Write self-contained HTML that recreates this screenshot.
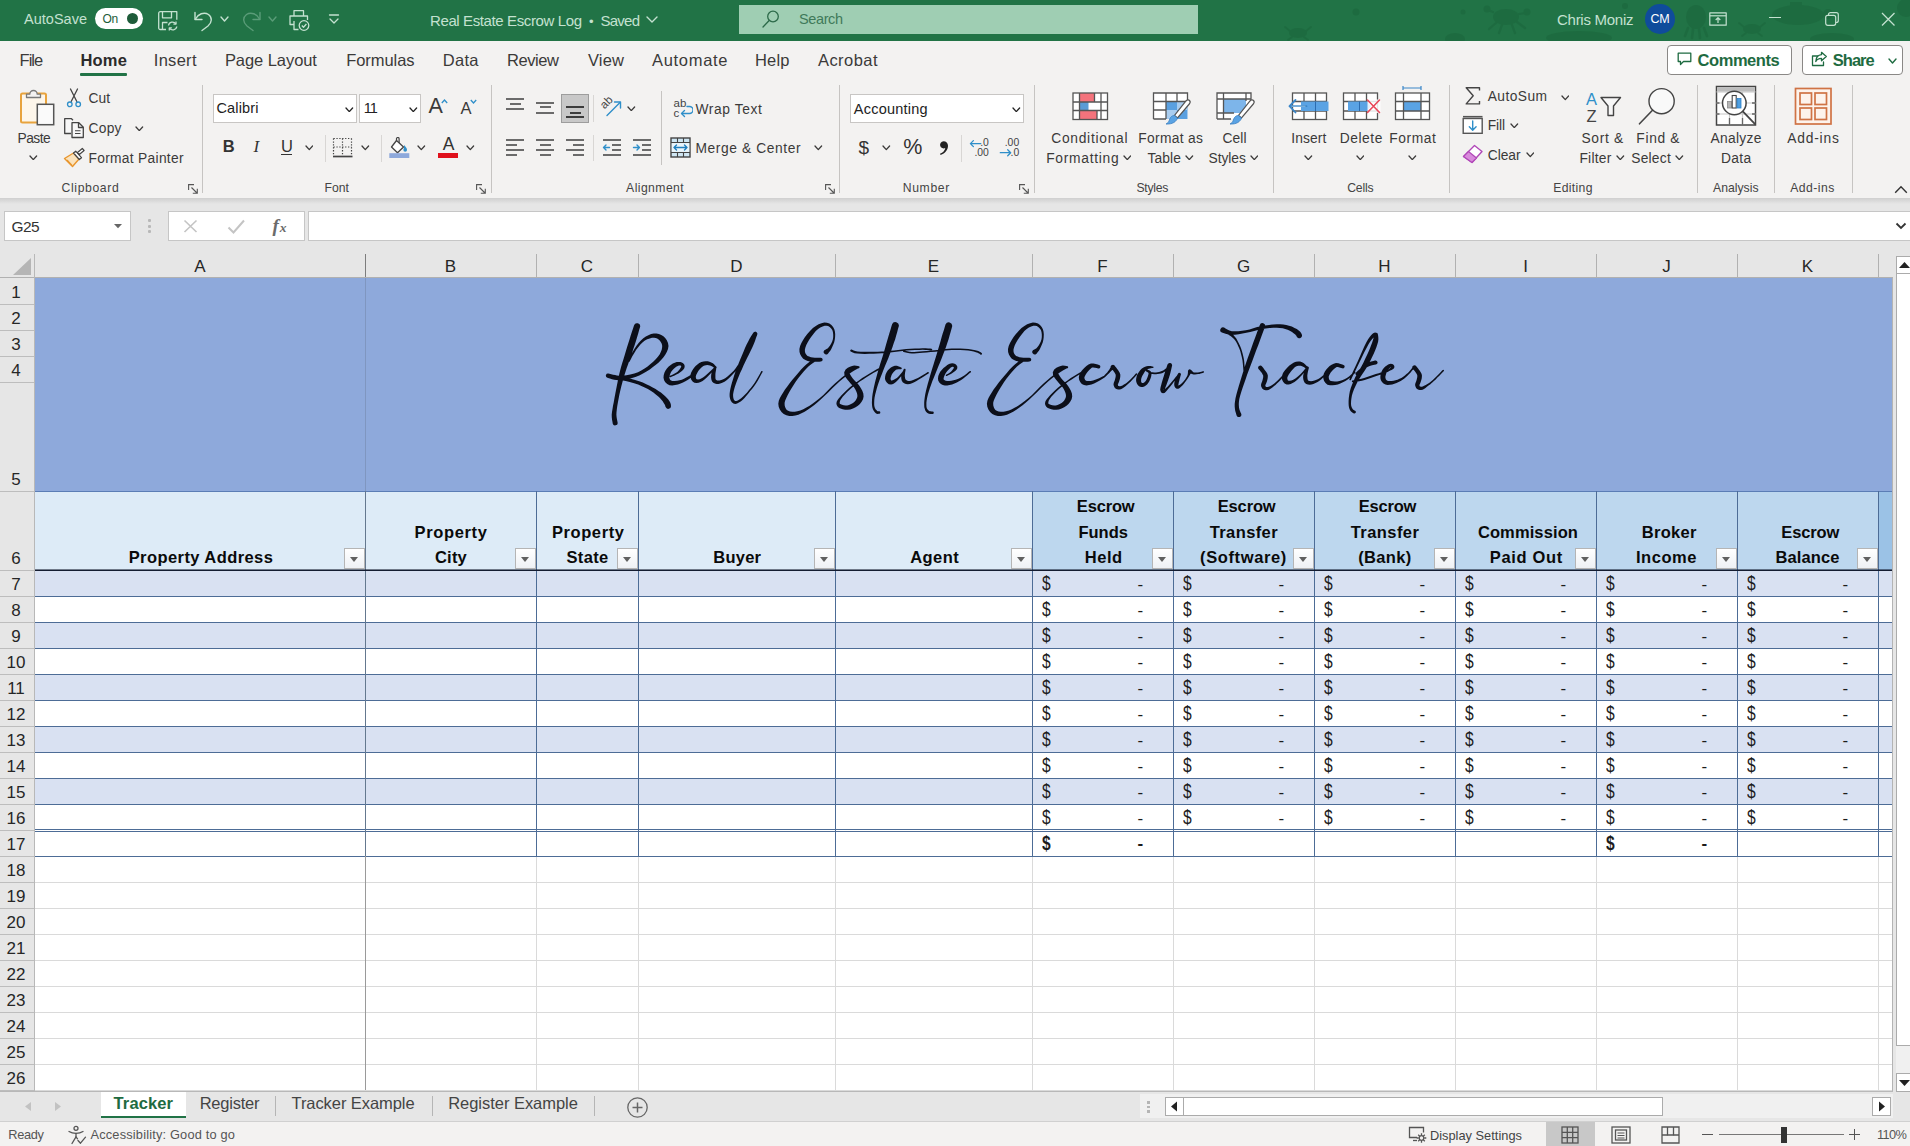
<!DOCTYPE html>
<html><head><meta charset="utf-8"><title>Real Estate Escrow Log - Excel</title>
<style>
*{box-sizing:border-box;margin:0;padding:0}
html,body{width:1910px;height:1146px;overflow:hidden;background:#e6e6e6;font-family:"Liberation Sans",sans-serif;color:#262626}
.abs{position:absolute}
.t{position:absolute;white-space:nowrap;line-height:1}
#titlebar{position:absolute;left:0;top:0;width:1910px;height:41px;background:#217346;overflow:hidden}
#tabs{position:absolute;left:0;top:41px;width:1910px;height:39px;background:#f3f2f1}
#ribbon{position:absolute;left:0;top:80px;width:1910px;height:118px;background:#f3f2f1}
#shadow{position:absolute;left:0;top:198px;width:1910px;height:6px;background:linear-gradient(#cfcfcf,#e6e6e6)}
#formula{position:absolute;left:0;top:204px;width:1910px;height:50px;background:#e6e6e6}
#grid{position:absolute;left:0;top:254px;width:1910px;height:838px;background:#fff;overflow:hidden}
#sheettabs{position:absolute;left:0;top:1092px;width:1910px;height:30px;background:#e6e6e6}
#status{position:absolute;left:0;top:1122px;width:1910px;height:24px;background:#f3f2f1}
.ch{position:absolute;top:0;height:24px;line-height:25px;text-align:center;font-size:17px;color:#262626}
.rh{position:absolute;left:0;width:34px;border-bottom:1px solid #bdbdbd;text-align:center;font-size:17px;color:#262626}
.rh span{position:absolute;left:0;right:2px;bottom:2px;line-height:18px}
.ht{position:absolute;text-align:center;font-weight:bold;font-size:16.5px;letter-spacing:.5px;line-height:20px;color:#0a0a0a;white-space:nowrap}
.fb{position:absolute;width:21px;height:21px;background:linear-gradient(#fff,#eef1f5);border:1px solid #b5b5b5}
.fb i{position:absolute;left:5px;top:8px;width:0;height:0;border-left:4px solid transparent;border-right:4px solid transparent;border-top:5px solid #606060}
.dl,.ds{position:absolute;font-size:17px;line-height:20px;color:#1c1c1c}
.dl{font-size:19.5px;transform:scaleX(.8);transform-origin:0 0}
.b{font-weight:bold}

</style></head>
<body>
<div id="titlebar">
<svg class="abs" style="left:1200px;top:0" width="710" height="41" viewBox="1200 0 710 41" opacity="0.6">
<g fill="#1c673d" stroke="#1c673d" stroke-linecap="round">
<ellipse cx="1506" cy="17" rx="13" ry="8" stroke="none"/><circle cx="1487" cy="9" r="3.500" stroke="none"/><circle cx="1527" cy="12" r="3.500" stroke="none"/><path d="M1493 12l-5-2M1519 14l7-1M1496 23l-7 6M1502 25l-3 8M1512 25l3 8M1517 22l8 6" stroke-width="2.200" fill="none"/>
<ellipse cx="1298" cy="33" rx="9" ry="5" stroke="none"/><path d="M1290 31l-5-4M1306 31l5-4M1292 37l-4 3M1304 37l4 3" stroke-width="1.800" fill="none"/>
<circle cx="1356" cy="12" r="3.500" stroke="none"/><circle cx="1463" cy="12" r="2.500" stroke="none"/><circle cx="1625" cy="6" r="3" stroke="none"/>
<ellipse cx="1696" cy="17" rx="10" ry="12" stroke="none"/><path d="M1688 28l-3 8M1693 29l-1 9M1699 29l1 9M1704 28l3 8" stroke-width="2.500" fill="none"/>
<ellipse cx="1798" cy="15" rx="26" ry="10" stroke="none"/><rect x="1790" y="2" width="12" height="6" stroke="none"/><circle cx="1828" cy="14" r="5" stroke="none"/>
<ellipse cx="1579" cy="38" rx="33" ry="7" stroke="none"/><ellipse cx="1455" cy="39" rx="10" ry="6" stroke="none"/>
<ellipse cx="1752" cy="29" rx="9" ry="5" stroke="none"/><path d="M1744 27l-5-4M1760 27l5-4M1746 33l-4 3M1758 33l4 3" stroke-width="1.800" fill="none"/>
<ellipse cx="1832" cy="39" rx="22" ry="6" stroke="none"/><circle cx="1906" cy="8" r="9" stroke="none"/>
</g></svg>
<div class="t" style="left:24.00px;top:11.93px;font-size:14.5px;color:#c4e1d0;letter-spacing:0.014px;">AutoSave</div>
<div class="abs" style="left:95px;top:8px;width:48px;height:21px;border-radius:11px;background:#fff"></div>
<div class="t" style="left:102.50px;top:13.04px;font-size:12px;color:#1e5c3a;letter-spacing:-.3px;">On</div>
<div class="abs" style="left:126.5px;top:13px;width:11px;height:11px;border-radius:6px;background:#1e5c3a"></div>
<svg class="abs" style="left:157px;top:10px" width="23" height="22" viewBox="0 0 23 22"><g fill="none" stroke="#c4e1d0" stroke-width="1.3" stroke-linejoin="round"><path d="M9 19.5H3.2a1.5 1.5 0 0 1-1.5-1.5V3.2a1.5 1.5 0 0 1 1.5-1.5H16l3.8 0v8"/><path d="M5.5 1.8v6h9v-6"/><path d="M5.5 19.5v-7h5"/><path d="M11.5 15.5a4 4 0 0 1 7.3-1.6M19.8 16.5a4 4 0 0 1-7.3 1.6"/><path d="M19 11.5v2.6h-2.6M12.3 20.5v-2.6h2.6"/></g></svg>
<svg class="abs" style="left:193px;top:10px" width="21" height="22" viewBox="0 0 21 22"><g fill="none" stroke="#c4e1d0" stroke-width="1.4" stroke-linecap="round" stroke-linejoin="round"><path d="M2 2.5v7h7"/><path d="M2.3 9.2C5 4 11 1.5 15.5 4.5c4 3 3.6 8-0.5 11.500L9 20.500"/></g></svg>
<svg class="abs" style="left:220.0px;top:16.0px" width="9" height="6" viewBox="-1 -1 9 6"><path d="M0 0L3.5 4L7 0" fill="none" stroke="#c4e1d0" stroke-width="1.4" stroke-linecap="round" stroke-linejoin="round"/></svg>
<svg class="abs" style="left:241px;top:10px" width="21" height="22" viewBox="0 0 21 22"><g fill="none" stroke="#5a9c78" stroke-width="1.4" stroke-linecap="round" stroke-linejoin="round"><path d="M19 2.5v7h-7"/><path d="M18.700 9.2C16 4 10 1.500 5.500 4.500c-4 3-3.600 8 .5 11.500L12 20.500"/></g></svg>
<svg class="abs" style="left:268.0px;top:16.0px" width="9" height="6" viewBox="-1 -1 9 6"><path d="M0 0L3.5 4L7 0" fill="none" stroke="#5a9c78" stroke-width="1.4" stroke-linecap="round" stroke-linejoin="round"/></svg>
<svg class="abs" style="left:288px;top:9px" width="23" height="23" viewBox="0 0 23 23"><g fill="none" stroke="#c4e1d0" stroke-width="1.3" stroke-linejoin="round"><path d="M6 7V1.700h9.500V7"/><path d="M6 15.500H2V7h17.500v4"/><path d="M6 12v8.500h4.500"/><circle cx="16" cy="16.500" r="4.800"/><path d="M13.800 16.500l1.700 1.700 2.900-3.200"/></g></svg>
<svg class="abs" style="left:328px;top:13px" width="12" height="12" viewBox="0 0 12 12"><g fill="none" stroke="#c4e1d0" stroke-width="1.3" stroke-linecap="round" stroke-linejoin="round"><path d="M1.500 2h9"/><path d="M2 6l4 4 4-4"/></g></svg>
<div class="t" style="left:430.00px;top:12.80px;font-size:15px;color:#c4e1d0;letter-spacing:-0.386px;">Real Estate Escrow Log</div>
<div class="t" style="left:589.00px;top:14.50px;font-size:13px;color:#c4e1d0;">•</div>
<div class="t" style="left:600.50px;top:12.80px;font-size:15px;color:#c4e1d0;letter-spacing:-0.750px;">Saved</div>
<svg class="abs" style="left:646.0px;top:16.0px" width="12" height="7" viewBox="-1 -1 12 7"><path d="M0 0L5.0 5L10 0" fill="none" stroke="#c4e1d0" stroke-width="1.4" stroke-linecap="round" stroke-linejoin="round"/></svg>
<div class="abs" style="left:739px;top:5px;width:459px;height:29px;background:#9fceb3"></div>
<svg class="abs" style="left:761px;top:9px" width="20" height="20" viewBox="0 0 20 20"><g fill="none" stroke="#2c6a49" stroke-width="1.300" stroke-linecap="round"><circle cx="12" cy="7.500" r="5.300"/><path d="M8.200 11.500L2 18"/></g></svg>
<div class="t" style="left:799.00px;top:12.23px;font-size:14.5px;color:#3f7a5a;letter-spacing:-0.380px;">Search</div>
<div class="t" style="left:1557.00px;top:11.80px;font-size:15px;color:#c4e1d0;letter-spacing:-0.270px;">Chris Moniz</div>
<div class="abs" style="left:1645px;top:4px;width:30px;height:30px;border-radius:15px;background:#0f4c9c"></div>
<div class="t" style="left:1650.50px;top:13.22px;font-size:12.5px;color:#fff;letter-spacing:-0.400px;">CM</div>
<svg class="abs" style="left:1709px;top:12px" width="18" height="14" viewBox="0 0 18 14"><g fill="none" stroke="#c4e1d0" stroke-width="1.2" stroke-linejoin="round"><rect x="0.8" y="0.8" width="16.400" height="12.400"/><path d="M0.800 3.800h16.400"/><path d="M9 11V6M6.700 8L9 5.700 11.300 8"/></g></svg>
<div class="abs" style="left:1769px;top:17px;width:12px;height:1.3px;background:#c4e1d0"></div>
<svg class="abs" style="left:1825px;top:12px" width="14" height="14" viewBox="0 0 14 14"><g fill="none" stroke="#c4e1d0" stroke-width="1.2"><rect x="0.700" y="3.300" width="10" height="10" rx="2"/><path d="M3.500 3V2.700a2 2 0 0 1 2-2h5.800a2 2 0 0 1 2 2v5.800a2 2 0 0 1-2 2h-.5"/></g></svg>
<svg class="abs" style="left:1881px;top:12px" width="15" height="15" viewBox="0 0 15 15"><path d="M1 1l12.500 12.500M13.500 1L1 13.500" fill="none" stroke="#c4e1d0" stroke-width="1.300"/></svg>
</div>
<div id="tabs">
<div class="t" style="left:19.60px;top:10.83px;font-size:16.5px;color:#3b3a39;letter-spacing:-1.000px;">File</div>
<div class="t" style="left:80.40px;top:10.83px;font-size:16.5px;color:#2b2b2b;letter-spacing:0.233px;font-weight:bold;">Home</div>
<div class="abs" style="left:80px;top:32px;width:47px;height:3px;background:#217346;border-radius:1px"></div>
<div class="t" style="left:153.80px;top:10.83px;font-size:16.5px;color:#3b3a39;letter-spacing:0.280px;">Insert</div>
<div class="t" style="left:224.90px;top:10.83px;font-size:16.5px;color:#3b3a39;letter-spacing:-0.060px;">Page Layout</div>
<div class="t" style="left:346.20px;top:10.83px;font-size:16.5px;color:#3b3a39;letter-spacing:-0.057px;">Formulas</div>
<div class="t" style="left:442.70px;top:10.83px;font-size:16.5px;color:#3b3a39;letter-spacing:0.300px;">Data</div>
<div class="t" style="left:507.00px;top:10.83px;font-size:16.5px;color:#3b3a39;letter-spacing:-0.440px;">Review</div>
<div class="t" style="left:588.00px;top:10.83px;font-size:16.5px;color:#3b3a39;letter-spacing:0.167px;">View</div>
<div class="t" style="left:652.00px;top:10.83px;font-size:16.5px;color:#3b3a39;letter-spacing:0.700px;">Automate</div>
<div class="t" style="left:755.00px;top:10.83px;font-size:16.5px;color:#3b3a39;letter-spacing:0.200px;">Help</div>
<div class="t" style="left:818.00px;top:10.83px;font-size:16.5px;color:#3b3a39;letter-spacing:0.433px;">Acrobat</div>
<div class="abs" style="left:1667px;top:4px;width:125px;height:30px;background:#fff;border:1px solid #8a8886;border-radius:4px"></div>
<svg class="abs" style="left:1677px;top:11px" width="16" height="15" viewBox="0 0 16 15"><path d="M1.200 1.200h12.600v8.300H6.500L3.500 12.500V9.500H1.200z" fill="none" stroke="#1e6b41" stroke-width="1.300" stroke-linejoin="round"/></svg>
<div class="t" style="left:1697.60px;top:10.83px;font-size:16.5px;color:#1e6b41;letter-spacing:-0.457px;font-weight:bold;">Comments</div>
<div class="abs" style="left:1802px;top:4px;width:101px;height:30px;background:#fff;border:1px solid #8a8886;border-radius:4px"></div>
<div class="abs" style="left:1883px;top:5px;width:1px;height:28px;background:#fff"></div>
<svg class="abs" style="left:1811px;top:10px" width="17" height="16" viewBox="0 0 17 16"><g fill="none" stroke="#1e6b41" stroke-width="1.300" stroke-linejoin="round" stroke-linecap="round"><path d="M6.500 5H1.500v9.500h11V11"/><path d="M10.500 1.300L15.300 5.500 10.500 9.700V7.300C7.500 7.300 5.800 8.300 4.800 10.500 5 6.500 7 4 10.500 3.700z"/></g></svg>
<div class="t" style="left:1832.80px;top:10.83px;font-size:16.5px;color:#1e6b41;letter-spacing:-1.000px;font-weight:bold;">Share</div>
<svg class="abs" style="left:1888.0px;top:16.5px" width="9" height="6" viewBox="-1 -1 9 6"><path d="M0 0L3.5 4L7 0" fill="none" stroke="#1e6b41" stroke-width="1.4" stroke-linecap="round" stroke-linejoin="round"/></svg>
</div>
<div id="ribbon">
<svg class="abs" style="left:19px;top:8px" width="37" height="39" viewBox="0 0 37 39">
<rect x="2" y="5.500" width="25" height="29" rx="1.500" fill="#fdf6ea" stroke="#e8a33d" stroke-width="2"/>
<path d="M7.500 9.500V6.200h3.300a3.700 3.700 0 0 1 7.400 0h3.300v3.300z" fill="#f3f2f1" stroke="#7a7a7a" stroke-width="1.300" stroke-linejoin="round"/>
<rect x="18.300" y="16.300" width="16.400" height="20.400" fill="#fafafa" stroke="#555" stroke-width="1.500"/>
</svg>
<div class="t" style="left:17.60px;top:51.52px;font-size:13.8px;color:#3b3a39;letter-spacing:-0.575px;">Paste</div>
<svg class="abs" style="left:29.2px;top:74.8px" width="8.6" height="5.6" viewBox="-1 -1 8.6 5.6"><path d="M0 0L3.3 3.6L6.6 0" fill="none" stroke="#3b3a39" stroke-width="1.3" stroke-linecap="round" stroke-linejoin="round"/></svg>
<svg class="abs" style="left:66px;top:8px" width="16" height="20" viewBox="0 0 16 20"><g fill="none" stroke-linecap="round"><path d="M4.500 1l6.300 12.500M11.500 1L5.200 13.500" stroke="#444" stroke-width="1.300"/><circle cx="3.800" cy="16.300" r="2.300" stroke="#2f8fc9" stroke-width="1.300"/><circle cx="12.200" cy="16.300" r="2.300" stroke="#2f8fc9" stroke-width="1.300"/></g></svg>
<div class="t" style="left:88.50px;top:11.72px;font-size:13.8px;color:#3b3a39;">Cut</div>
<svg class="abs" style="left:63px;top:37px" width="22" height="22" viewBox="0 0 22 22"><g fill="#f7f7f7" stroke="#444" stroke-width="1.300" stroke-linejoin="round"><path d="M8 16.500H1.700V1.700h6.800l1.500 1.500"/><path d="M9 5.700h6.800l4.500 4.500v10.300H9z"/><path d="M15.500 5.700v4.800h4.800" fill="none"/><path d="M12 13.800h5.500M12 16.500h5.500" fill="none" stroke-width="1.100"/></g></svg>
<div class="t" style="left:88.50px;top:41.82px;font-size:13.8px;color:#3b3a39;letter-spacing:0.267px;">Copy</div>
<svg class="abs" style="left:135.3px;top:45.8px" width="8.6" height="5.6" viewBox="-1 -1 8.6 5.6"><path d="M0 0L3.3 3.6L6.6 0" fill="none" stroke="#3b3a39" stroke-width="1.3" stroke-linecap="round" stroke-linejoin="round"/></svg>
<svg class="abs" style="left:63px;top:67px" width="23" height="21" viewBox="0 0 23 21"><g stroke-linejoin="round"><path d="M1.500 11.500l9-5.500 5.500 6-6.500 7.500z" fill="#fbe3bd" stroke="#e8962e" stroke-width="1.400"/><path d="M4 13l5 5.500" stroke="#e8962e" stroke-width="1.200"/><path d="M10.500 6l2.200-1.800 5.800 6.500-2.200 1.800z" fill="#fff" stroke="#444" stroke-width="1.200"/><path d="M14.500 5.500l4.800-4 1.800 2-4.800 4z" fill="#fff" stroke="#444" stroke-width="1.200"/></g></svg>
<div class="t" style="left:88.50px;top:71.92px;font-size:13.8px;color:#3b3a39;letter-spacing:0.292px;">Format Painter</div>
<div class="t" style="left:61.60px;top:102.17px;font-size:12.2px;color:#444;letter-spacing:0.612px;">Clipboard</div>
<svg class="abs" style="left:188px;top:103.5px" width="10" height="10" viewBox="0 0 10 10"><g fill="none" stroke="#555" stroke-width="1.1"><path d="M0.600 6V0.600H6"/><path d="M3.500 3.500l5.500 5.500M9.300 4.800v4.500H4.800"/></g></svg>
<div class="abs" style="left:202.3px;top:4.5px;width:1px;height:108.0px;background:#c6c4c2"></div>
<div class="abs" style="left:213px;top:14px;width:144px;height:29px;background:#fff;border:1px solid #c8c6c4"></div>
<div class="t" style="left:216.50px;top:21.23px;font-size:14.5px;color:#222;letter-spacing:0.133px;">Calibri</div>
<svg class="abs" style="left:345.1px;top:26.6px" width="8.6" height="5.6" viewBox="-1 -1 8.6 5.6"><path d="M0 0L3.3 3.6L6.6 0" fill="none" stroke="#222" stroke-width="1.3" stroke-linecap="round" stroke-linejoin="round"/></svg>
<div class="abs" style="left:359px;top:14px;width:62px;height:29px;background:#fff;border:1px solid #c8c6c4"></div>
<div class="t" style="left:363.80px;top:21.23px;font-size:14.5px;color:#222;letter-spacing:-1px;">11</div>
<svg class="abs" style="left:409.0px;top:26.6px" width="8.6" height="5.6" viewBox="-1 -1 8.6 5.6"><path d="M0 0L3.3 3.6L6.6 0" fill="none" stroke="#222" stroke-width="1.3" stroke-linecap="round" stroke-linejoin="round"/></svg>
<div class="t" style="left:428.50px;top:15.60px;font-size:21.5px;color:#3b3a39;">A</div>
<svg class="abs" style="left:440.5px;top:18.5px" width="7" height="5" viewBox="0 0 7 5"><path d="M0.800 4L3.500 1 6.200 4" fill="none" stroke="#2f8fc9" stroke-width="1.300"/></svg>
<div class="t" style="left:460.40px;top:19.83px;font-size:16.5px;color:#3b3a39;">A</div>
<svg class="abs" style="left:470px;top:18.5px" width="7" height="5" viewBox="0 0 7 5"><path d="M0.800 1L3.500 4 6.200 1" fill="none" stroke="#2f8fc9" stroke-width="1.300"/></svg>
<div class="t" style="left:222.80px;top:58.33px;font-size:16.5px;color:#333;font-weight:bold;">B</div>
<div class="t" style="left:253.60px;top:58.06px;font-size:17px;color:#333;font-style:italic;font-family:'Liberation Serif',serif;">I</div>
<div class="t" style="left:280.90px;top:58.33px;font-size:16.5px;color:#333;">U</div>
<div class="abs" style="left:280.500px;top:74.19999999999999px;width:11.500px;height:1.300px;background:#333"></div>
<svg class="abs" style="left:304.9px;top:65.4px" width="8.6" height="5.6" viewBox="-1 -1 8.6 5.6"><path d="M0 0L3.3 3.6L6.6 0" fill="none" stroke="#3b3a39" stroke-width="1.3" stroke-linecap="round" stroke-linejoin="round"/></svg>
<div class="abs" style="left:324.5px;top:55.0px;width:1px;height:26.7px;background:#d8d6d4"></div>
<svg class="abs" style="left:332px;top:57px" width="21" height="21" viewBox="0 0 21 21"><g fill="none" stroke="#444"><path d="M1.500 1.500h18M1.500 1.500v17M19.500 1.500v17M10.500 1.500v17M1.500 10h18" stroke-width="1.200" stroke-dasharray="1.300 1.600"/><path d="M1 19.500h19.500" stroke-width="1.700"/></g></svg>
<svg class="abs" style="left:361.0px;top:65.4px" width="8.6" height="5.6" viewBox="-1 -1 8.6 5.6"><path d="M0 0L3.3 3.6L6.6 0" fill="none" stroke="#3b3a39" stroke-width="1.3" stroke-linecap="round" stroke-linejoin="round"/></svg>
<div class="abs" style="left:380.6px;top:55.0px;width:1px;height:26.7px;background:#d8d6d4"></div>
<svg class="abs" style="left:389px;top:57px" width="21" height="22" viewBox="0 0 21 22"><path d="M7.500 3.500l7 6.500-6 5.800-6-5.800z" fill="#fff" stroke="#444" stroke-width="1.300" stroke-linejoin="round"/><path d="M7.500 3.500V1.800a1.300 1.300 0 0 1 2.600 0V6" fill="none" stroke="#444" stroke-width="1.200"/><path d="M15 8c2 2 3 3.500 3 5a1.800 1.800 0 0 1-3.600 0c0-.8.300-1.500.6-2z" fill="#2f8fc9"/><rect x="0.300" y="16.200" width="20" height="4.800" fill="#8ea9db"/></svg>
<svg class="abs" style="left:417.2px;top:65.4px" width="8.6" height="5.6" viewBox="-1 -1 8.6 5.6"><path d="M0 0L3.3 3.6L6.6 0" fill="none" stroke="#3b3a39" stroke-width="1.3" stroke-linecap="round" stroke-linejoin="round"/></svg>
<div class="t" style="left:442.70px;top:56.49px;font-size:17.5px;color:#333;">A</div>
<div class="abs" style="left:438.3px;top:73.19999999999999px;width:19.7px;height:4.800px;background:#e0111c"></div>
<svg class="abs" style="left:466.2px;top:65.4px" width="8.6" height="5.6" viewBox="-1 -1 8.6 5.6"><path d="M0 0L3.3 3.6L6.6 0" fill="none" stroke="#3b3a39" stroke-width="1.3" stroke-linecap="round" stroke-linejoin="round"/></svg>
<div class="t" style="left:324.50px;top:102.17px;font-size:12.2px;color:#444;">Font</div>
<svg class="abs" style="left:476px;top:103.5px" width="10" height="10" viewBox="0 0 10 10"><g fill="none" stroke="#555" stroke-width="1.1"><path d="M0.600 6V0.600H6"/><path d="M3.500 3.500l5.500 5.500M9.300 4.800v4.500H4.800"/></g></svg>
<div class="abs" style="left:490.6px;top:4.5px;width:1px;height:108.0px;background:#c6c4c2"></div>
<div class="abs" style="left:506px;top:18px;width:18px;height:2px;background:#6b6b6b"></div>
<div class="abs" style="left:510px;top:23px;width:11px;height:2px;background:#6b6b6b"></div>
<div class="abs" style="left:506px;top:28px;width:18px;height:2px;background:#6b6b6b"></div>
<div class="abs" style="left:536px;top:22px;width:18px;height:2px;background:#6b6b6b"></div>
<div class="abs" style="left:540px;top:26px;width:11px;height:2px;background:#6b6b6b"></div>
<div class="abs" style="left:536px;top:32px;width:18px;height:2px;background:#6b6b6b"></div>
<div class="abs" style="left:561px;top:14px;width:28px;height:29px;background:#c8c8c8;border:1px solid #9d9d9d"></div>
<div class="abs" style="left:566px;top:26px;width:18px;height:2px;background:#3c3c3c"></div>
<div class="abs" style="left:570px;top:32px;width:11px;height:2px;background:#3c3c3c"></div>
<div class="abs" style="left:566px;top:36px;width:18px;height:2px;background:#3c3c3c"></div>
<div class="abs" style="left:593.3px;top:15.0px;width:1px;height:27.4px;background:#d8d6d4"></div>
<svg class="abs" style="left:601px;top:16px" width="23" height="22" viewBox="0 0 23 22"><g fill="none" stroke-linecap="round"><path d="M6 19.500L19 6.500" stroke="#2f8fc9" stroke-width="1.400"/><path d="M13.500 6h6v6" stroke="#2f8fc9" stroke-width="1.400" stroke-linejoin="round"/></g><text x="0" y="0" font-family="Liberation Sans" font-size="11.500" fill="#444" transform="translate(3.500 13.500) rotate(-45)">ab</text></svg>
<svg class="abs" style="left:627.2px;top:25.5px" width="8.6" height="5.6" viewBox="-1 -1 8.6 5.6"><path d="M0 0L3.3 3.6L6.6 0" fill="none" stroke="#3b3a39" stroke-width="1.3" stroke-linecap="round" stroke-linejoin="round"/></svg>
<div class="abs" style="left:661.1px;top:11.3px;width:1px;height:73.5px;background:#c6c4c2"></div>
<svg class="abs" style="left:673px;top:17px" width="20" height="22" viewBox="0 0 20 22"><text x="0.500" y="9.500" font-family="Liberation Sans" font-size="11.500" fill="#444">ab</text><text x="0.500" y="19.500" font-family="Liberation Sans" font-size="11.500" fill="#444">c</text><g fill="none" stroke="#2f8fc9" stroke-width="1.400" stroke-linecap="round" stroke-linejoin="round"><path d="M14 9.500h2.500a3 3 0 0 1 0 7H9"/><path d="M11.500 13.500l-3 3 3 3"/></g></svg>
<div class="t" style="left:695.40px;top:22.62px;font-size:13.8px;color:#3b3a39;letter-spacing:0.600px;">Wrap Text</div>
<div class="abs" style="left:506px;top:59px;width:18px;height:2px;background:#6b6b6b"></div>
<div class="abs" style="left:506px;top:64px;width:11px;height:2px;background:#6b6b6b"></div>
<div class="abs" style="left:506px;top:69px;width:18px;height:2px;background:#6b6b6b"></div>
<div class="abs" style="left:506px;top:74px;width:11px;height:2px;background:#6b6b6b"></div>
<div class="abs" style="left:536px;top:59px;width:18px;height:2px;background:#6b6b6b"></div>
<div class="abs" style="left:540px;top:64px;width:11px;height:2px;background:#6b6b6b"></div>
<div class="abs" style="left:536px;top:69px;width:18px;height:2px;background:#6b6b6b"></div>
<div class="abs" style="left:540px;top:74px;width:11px;height:2px;background:#6b6b6b"></div>
<div class="abs" style="left:566px;top:59px;width:18px;height:2px;background:#6b6b6b"></div>
<div class="abs" style="left:573px;top:64px;width:11px;height:2px;background:#6b6b6b"></div>
<div class="abs" style="left:566px;top:69px;width:18px;height:2px;background:#6b6b6b"></div>
<div class="abs" style="left:573px;top:74px;width:11px;height:2px;background:#6b6b6b"></div>
<div class="abs" style="left:593.3px;top:54.7px;width:1px;height:26.3px;background:#d8d6d4"></div>
<div class="abs" style="left:603px;top:59px;width:18px;height:2px;background:#6b6b6b"></div>
<div class="abs" style="left:612px;top:64px;width:9px;height:2px;background:#6b6b6b"></div>
<div class="abs" style="left:612px;top:69px;width:9px;height:2px;background:#6b6b6b"></div>
<div class="abs" style="left:603px;top:74px;width:18px;height:2px;background:#6b6b6b"></div>
<svg class="abs" style="left:602px;top:63px" width="9" height="9" viewBox="0 0 9 9"><g fill="none" stroke="#2f8fc9" stroke-width="1.400" stroke-linecap="round" stroke-linejoin="round"><path d="M7.500 4.500H1.500M4 2L1.500 4.500 4 7"/></g></svg>
<div class="abs" style="left:633px;top:59px;width:18px;height:2px;background:#6b6b6b"></div>
<div class="abs" style="left:642px;top:64px;width:9px;height:2px;background:#6b6b6b"></div>
<div class="abs" style="left:642px;top:69px;width:9px;height:2px;background:#6b6b6b"></div>
<div class="abs" style="left:633px;top:74px;width:18px;height:2px;background:#6b6b6b"></div>
<svg class="abs" style="left:632px;top:63px" width="9" height="9" viewBox="0 0 9 9"><g fill="none" stroke="#2f8fc9" stroke-width="1.400" stroke-linecap="round" stroke-linejoin="round"><path d="M1.500 4.500H7.500M5 2L7.500 4.500 5 7"/></g></svg>
<svg class="abs" style="left:670px;top:57px" width="21" height="21" viewBox="0 0 21 21"><rect x="1" y="1" width="19" height="19" fill="#cfe6f3" stroke="#444" stroke-width="1.400"/><path d="M1 5.500h19M1 15.500h19M7.500 1v4.500M13.500 1v4.500M7.500 15.500V20M13.500 15.500V20" stroke="#444" stroke-width="1.100" fill="none"/><rect x="1.700" y="6.200" width="17.600" height="8.600" fill="#eaf5fb"/><g fill="none" stroke="#1f7fbf" stroke-width="1.400" stroke-linecap="round" stroke-linejoin="round"><path d="M4 10.500h13M6.500 8L4 10.500 6.500 13M14.500 8l2.500 2.500-2.500 2.500"/></g></svg>
<div class="t" style="left:695.40px;top:61.82px;font-size:13.8px;color:#3b3a39;letter-spacing:0.600px;">Merge &amp; Center</div>
<svg class="abs" style="left:814.0px;top:65.4px" width="8.6" height="5.6" viewBox="-1 -1 8.6 5.6"><path d="M0 0L3.3 3.6L6.6 0" fill="none" stroke="#3b3a39" stroke-width="1.3" stroke-linecap="round" stroke-linejoin="round"/></svg>
<div class="t" style="left:626.10px;top:102.17px;font-size:12.2px;color:#444;letter-spacing:0.425px;">Alignment</div>
<svg class="abs" style="left:825.3px;top:103.5px" width="10" height="10" viewBox="0 0 10 10"><g fill="none" stroke="#555" stroke-width="1.1"><path d="M0.600 6V0.600H6"/><path d="M3.500 3.500l5.500 5.500M9.300 4.800v4.500H4.800"/></g></svg>
<div class="abs" style="left:839.2px;top:4.5px;width:1px;height:108.0px;background:#c6c4c2"></div>
<div class="abs" style="left:850px;top:14px;width:174px;height:29px;background:#fff;border:1px solid #c8c6c4"></div>
<div class="t" style="left:853.80px;top:21.83px;font-size:14.5px;color:#222;letter-spacing:0.222px;">Accounting</div>
<svg class="abs" style="left:1012.1px;top:26.6px" width="8.6" height="5.6" viewBox="-1 -1 8.6 5.6"><path d="M0 0L3.3 3.6L6.6 0" fill="none" stroke="#222" stroke-width="1.3" stroke-linecap="round" stroke-linejoin="round"/></svg>
<div class="t" style="left:858.40px;top:58.22px;font-size:19px;color:#333;">$</div>
<svg class="abs" style="left:882.1px;top:65.4px" width="8.6" height="5.6" viewBox="-1 -1 8.6 5.6"><path d="M0 0L3.3 3.6L6.6 0" fill="none" stroke="#3b3a39" stroke-width="1.3" stroke-linecap="round" stroke-linejoin="round"/></svg>
<div class="t" style="left:903.30px;top:57.30px;font-size:21.5px;color:#333;">%</div>
<svg class="abs" style="left:937px;top:60px" width="13" height="16" viewBox="0 0 13 16"><path d="M6.500 1.200a3.600 3.600 0 1 0 1.800 6.800c-.4 2.600-2.300 4.600-5.300 5.800l.6 1.200c4.600-1.600 7.400-5 7.400-9.200 0-2.800-1.900-4.600-4.500-4.600z" fill="#222"/></svg>
<div class="abs" style="left:961.4px;top:55.3px;width:1px;height:26.5px;background:#d8d6d4"></div>
<svg class="abs" style="left:969px;top:56px" width="22" height="23" viewBox="0 0 22 23"><g font-family="Liberation Sans" fill="#444" font-size="10.4" text-anchor="end"><text x="19.9" y="10">.0</text><text x="19.9" y="20.4">.00</text></g><g fill="none" stroke="#2f8fc9" stroke-width="1.300" stroke-linecap="round" stroke-linejoin="round"><path d="M11.800 7.600H1.400M4.400 4.600L1.400 7.600 4.400 10.600"/></g></svg>
<svg class="abs" style="left:999px;top:56px" width="22" height="23" viewBox="0 0 22 23"><g font-family="Liberation Sans" fill="#444" font-size="10.4" text-anchor="end"><text x="20.2" y="10">.00</text><text x="20.2" y="20.4">.0</text></g><g fill="none" stroke="#2f8fc9" stroke-width="1.300" stroke-linecap="round" stroke-linejoin="round"><path d="M1.300 16.700h10.400M8.700 13.700l3 3-3 3"/></g></svg>
<div class="t" style="left:902.70px;top:102.17px;font-size:12.2px;color:#444;letter-spacing:0.660px;">Number</div>
<svg class="abs" style="left:1019.4px;top:103.5px" width="10" height="10" viewBox="0 0 10 10"><g fill="none" stroke="#555" stroke-width="1.1"><path d="M0.600 6V0.600H6"/><path d="M3.500 3.500l5.500 5.500M9.300 4.800v4.500H4.800"/></g></svg>
<div class="abs" style="left:1033.5px;top:4.5px;width:1px;height:108.0px;background:#c6c4c2"></div>
<svg class="abs" style="left:1072px;top:12px" width="37" height="29" viewBox="0 0 37 29">
<rect x="1" y="1" width="34.500" height="26.500" fill="#fff"/>
<rect x="7.500" y="1" width="15" height="9" fill="#f4737c"/><rect x="7.500" y="10" width="9" height="8.500" fill="#5b9bd5"/><rect x="7.500" y="18.500" width="17.500" height="9" fill="#f4737c"/>
<g fill="none" stroke="#555" stroke-width="1.300"><rect x="1" y="1" width="34.500" height="26.500"/><path d="M1 10h34.500M1 18.500h34.500M7.500 1v26.500M29 1v26.500M22.500 1v9M25 18.500v9"/></g></svg>
<div class="t" style="left:1051.20px;top:52.12px;font-size:13.8px;color:#3b3a39;letter-spacing:0.730px;">Conditional</div>
<div class="t" style="left:1046.20px;top:72.42px;font-size:13.8px;color:#3b3a39;letter-spacing:0.722px;">Formatting</div>
<svg class="abs" style="left:1122.9px;top:74.7px" width="8.6" height="5.6" viewBox="-1 -1 8.6 5.6"><path d="M0 0L3.3 3.6L6.6 0" fill="none" stroke="#3b3a39" stroke-width="1.3" stroke-linecap="round" stroke-linejoin="round"/></svg>
<svg class="abs" style="left:1152px;top:12px" width="40" height="34" viewBox="0 0 40 34">
<path d="M1.500 1h34v26H1.500z" fill="#fff"/>
<rect x="14" y="9.500" width="21.500" height="17.500" fill="#5aa0e0"/><rect x="25" y="9.500" width="10.500" height="8.500" fill="#a9cdf0"/><rect x="14" y="18" width="11" height="9" fill="#a9cdf0"/>
<g fill="none" stroke="#555" stroke-width="1.300"><path d="M1.500 27V1h34v8.500M1.500 27h12.500M1.500 9.500h34M1.500 18h12.500M14 1v26M25 1v8.500"/></g>
<path d="M37.500 8.500c1 1 .8 2.300-.2 3.500L25.500 26l-3-2.500L34 9c1-1.200 2.500-1.500 3.500-.5z" fill="#fff" stroke="#555" stroke-width="1.200"/>
<path d="M22.500 23.500l3 2.500c-1 3.500-5 6.500-11.500 6 3.500-1.500 3-4.500 4.500-6.500 1.200-1.500 2.500-2 4-2z" fill="#5aa3e4" stroke="#3a7fc0" stroke-width=".8"/></svg>
<div class="t" style="left:1138.30px;top:52.12px;font-size:13.8px;color:#3b3a39;letter-spacing:0.300px;">Format as</div>
<div class="t" style="left:1147.50px;top:72.42px;font-size:13.8px;color:#3b3a39;letter-spacing:0.100px;">Table</div>
<svg class="abs" style="left:1185.1px;top:74.7px" width="8.6" height="5.6" viewBox="-1 -1 8.6 5.6"><path d="M0 0L3.3 3.6L6.6 0" fill="none" stroke="#3b3a39" stroke-width="1.3" stroke-linecap="round" stroke-linejoin="round"/></svg>
<svg class="abs" style="left:1215px;top:12px" width="41" height="34" viewBox="0 0 41 34">
<path d="M2 1h34v9L20 27H2z" fill="#fff"/>
<rect x="8.500" y="7" width="22.500" height="14" fill="#7db5ea"/>
<g fill="none" stroke="#555" stroke-width="1.300"><path d="M2 27V1h34v7M2 27h14M2 7h34M2 21h17M8.500 1v26M31 1v8"/></g>
<path d="M38.500 8.500c1 1 .8 2.300-.2 3.500L26.500 26l-3-2.500L35 9c1-1.200 2.500-1.500 3.500-.5z" fill="#fff" stroke="#555" stroke-width="1.200"/>
<path d="M23.500 23.500l3 2.500c-1 3.500-5 6.500-11.500 6 3.500-1.500 3-4.500 4.500-6.500 1.200-1.500 2.500-2 4-2z" fill="#5aa3e4" stroke="#3a7fc0" stroke-width=".8"/></svg>
<div class="t" style="left:1222.40px;top:52.12px;font-size:13.8px;color:#3b3a39;letter-spacing:0.133px;">Cell</div>
<div class="t" style="left:1208.60px;top:72.42px;font-size:13.8px;color:#3b3a39;letter-spacing:-0.060px;">Styles</div>
<svg class="abs" style="left:1249.8px;top:74.7px" width="8.6" height="5.6" viewBox="-1 -1 8.6 5.6"><path d="M0 0L3.3 3.6L6.6 0" fill="none" stroke="#3b3a39" stroke-width="1.3" stroke-linecap="round" stroke-linejoin="round"/></svg>
<div class="t" style="left:1136.50px;top:102.17px;font-size:12.2px;color:#444;letter-spacing:-0.280px;">Styles</div>
<div class="abs" style="left:1272.5px;top:4.5px;width:1px;height:108.0px;background:#c6c4c2"></div>
<svg class="abs" style="left:1287px;top:12px" width="43" height="29" viewBox="0 0 43 29">
<rect x="5.500" y="1" width="34" height="26.500" fill="#fff"/>
<g fill="none" stroke="#555" stroke-width="1.300"><rect x="5.500" y="1" width="34" height="26.500"/><path d="M5.500 9.500h34M5.500 19h34M17 1v26.500M28.500 1v26.500"/></g>
<rect x="14" y="9.500" width="27.500" height="9.500" fill="#5aa3e4"/><path d="M28.500 9.500v9.500" stroke="#2b6cb0" stroke-width="1"/>
<path d="M2.500 14.200h17M8.500 8L2.500 14.200 8.500 20.500" fill="none" stroke="#3a86c8" stroke-width="1.800" stroke-linecap="round" stroke-linejoin="round"/><path d="M4.500 14.200h14" stroke="#cfe6f7" stroke-width=".6"/></svg>
<div class="t" style="left:1291.20px;top:52.12px;font-size:13.8px;color:#3b3a39;letter-spacing:0.140px;">Insert</div>
<svg class="abs" style="left:1304.0px;top:74.7px" width="8.6" height="5.6" viewBox="-1 -1 8.6 5.6"><path d="M0 0L3.3 3.6L6.6 0" fill="none" stroke="#3b3a39" stroke-width="1.3" stroke-linecap="round" stroke-linejoin="round"/></svg>
<svg class="abs" style="left:1342px;top:12px" width="40" height="29" viewBox="0 0 40 29">
<rect x="1.500" y="1" width="34" height="26.500" fill="#fff"/>
<g fill="none" stroke="#555" stroke-width="1.300"><rect x="1.500" y="1" width="34" height="26.500"/><path d="M1.500 9.500h34M1.500 19h34M13 1v26.500M24.500 1v26.500"/></g>
<rect x="6" y="9.500" width="19" height="9.500" fill="#5aa3e4"/><path d="M17.500 9.500v9.500" stroke="#2b6cb0" stroke-width="1"/><path d="M25 9.500l4 4.700-4 4.800z" fill="#5aa3e4"/>
<rect x="25.500" y="7.500" width="13" height="13.500" fill="#fff" opacity=".85"/>
<path d="M25.500 8l12 12.500M37.500 8l-12 12.500" fill="none" stroke="#e8485a" stroke-width="1.600" stroke-linecap="round"/></svg>
<div class="t" style="left:1339.80px;top:52.12px;font-size:13.8px;color:#3b3a39;letter-spacing:0.540px;">Delete</div>
<svg class="abs" style="left:1355.8px;top:74.7px" width="8.6" height="5.6" viewBox="-1 -1 8.6 5.6"><path d="M0 0L3.3 3.6L6.6 0" fill="none" stroke="#3b3a39" stroke-width="1.3" stroke-linecap="round" stroke-linejoin="round"/></svg>
<svg class="abs" style="left:1394px;top:5px" width="38" height="36" viewBox="0 0 38 36">
<path d="M9 1v4M27 1v4M9 3h18" fill="none" stroke="#3a86c8" stroke-width="1.200"/>
<rect x="1.500" y="8" width="34" height="26.500" fill="#fff"/>
<rect x="9.500" y="16.500" width="17.500" height="9.500" fill="#5aa3e4"/>
<g fill="none" stroke="#555" stroke-width="1.300"><rect x="1.500" y="8" width="34" height="26.500"/><path d="M1.500 16.500h34M1.500 26h34M9.500 8v26.500M27 8v26.500"/></g></svg>
<div class="t" style="left:1389.30px;top:52.12px;font-size:13.8px;color:#3b3a39;letter-spacing:0.580px;">Format</div>
<svg class="abs" style="left:1408.1px;top:74.7px" width="8.6" height="5.6" viewBox="-1 -1 8.6 5.6"><path d="M0 0L3.3 3.6L6.6 0" fill="none" stroke="#3b3a39" stroke-width="1.3" stroke-linecap="round" stroke-linejoin="round"/></svg>
<div class="t" style="left:1347.20px;top:102.17px;font-size:12.2px;color:#444;letter-spacing:-0.150px;">Cells</div>
<div class="abs" style="left:1448.5px;top:4.5px;width:1px;height:108.0px;background:#c6c4c2"></div>
<svg class="abs" style="left:1464px;top:6px" width="18" height="20" viewBox="0 0 18 20"><path d="M15.500 4.500V1.700H2.200l7 8-7 8.200h13.300v-3" fill="none" stroke="#444" stroke-width="1.400" stroke-linejoin="round"/></svg>
<div class="t" style="left:1487.70px;top:10.22px;font-size:13.8px;color:#3b3a39;letter-spacing:0.433px;">AutoSum</div>
<svg class="abs" style="left:1560.9px;top:15.2px" width="8.6" height="5.6" viewBox="-1 -1 8.6 5.6"><path d="M0 0L3.3 3.6L6.6 0" fill="none" stroke="#3b3a39" stroke-width="1.3" stroke-linecap="round" stroke-linejoin="round"/></svg>
<svg class="abs" style="left:1462px;top:35px" width="22" height="20" viewBox="0 0 22 20"><rect x="1.200" y="3.500" width="19" height="14.800" fill="#fff" stroke="#555" stroke-width="1.400"/><path d="M1 1.700h19.500" stroke="#555" stroke-width="1.600"/><path d="M10.700 6v9M7.300 11.800l3.400 3.400 3.400-3.400" fill="none" stroke="#2f8fc9" stroke-width="1.400" stroke-linecap="round" stroke-linejoin="round"/></svg>
<div class="t" style="left:1487.70px;top:39.02px;font-size:13.8px;color:#3b3a39;letter-spacing:-0.100px;">Fill</div>
<svg class="abs" style="left:1510.2px;top:42.5px" width="8.6" height="5.6" viewBox="-1 -1 8.6 5.6"><path d="M0 0L3.3 3.6L6.6 0" fill="none" stroke="#3b3a39" stroke-width="1.3" stroke-linecap="round" stroke-linejoin="round"/></svg>
<svg class="abs" style="left:1462px;top:64px" width="22" height="20" viewBox="0 0 22 20"><path d="M1.500 12.500L12.500 1.500l7.500 6-10 11z" fill="#fff" stroke="#b148b8" stroke-width="1.400" stroke-linejoin="round"/><path d="M1.500 12.500l5-5 8 6.500-4.500 4.500z" fill="#d88bdc" stroke="#b148b8" stroke-width="1.200" stroke-linejoin="round"/></svg>
<div class="t" style="left:1487.70px;top:68.52px;font-size:13.8px;color:#3b3a39;letter-spacing:-0.025px;">Clear</div>
<svg class="abs" style="left:1525.5px;top:72.2px" width="8.6" height="5.6" viewBox="-1 -1 8.6 5.6"><path d="M0 0L3.3 3.6L6.6 0" fill="none" stroke="#3b3a39" stroke-width="1.3" stroke-linecap="round" stroke-linejoin="round"/></svg>
<div class="t" style="left:1586.00px;top:10.53px;font-size:16.5px;color:#2f8fc9;">A</div>
<div class="t" style="left:1586.50px;top:27.53px;font-size:16.5px;color:#444;">Z</div>
<svg class="abs" style="left:1600px;top:16px" width="22" height="22" viewBox="0 0 22 22"><path d="M1 1.500h19.500l-7 8.500v9.500h-5.500V10z" fill="#f7f7f7" stroke="#444" stroke-width="1.400" stroke-linejoin="round"/></svg>
<div class="t" style="left:1581.40px;top:52.12px;font-size:13.8px;color:#3b3a39;letter-spacing:0.680px;">Sort &amp;</div>
<div class="t" style="left:1579.40px;top:72.42px;font-size:13.8px;color:#3b3a39;letter-spacing:0.260px;">Filter</div>
<svg class="abs" style="left:1616.1px;top:74.7px" width="8.6" height="5.6" viewBox="-1 -1 8.6 5.6"><path d="M0 0L3.3 3.6L6.6 0" fill="none" stroke="#3b3a39" stroke-width="1.3" stroke-linecap="round" stroke-linejoin="round"/></svg>
<svg class="abs" style="left:1638px;top:7px" width="38" height="39" viewBox="0 0 38 39"><circle cx="23.600" cy="14.200" r="12.600" fill="#f9f9f9" stroke="#444" stroke-width="1.400"/><path d="M14.500 23.300L1.500 36.800" stroke="#444" stroke-width="1.600" stroke-linecap="round"/></svg>
<div class="t" style="left:1636.30px;top:52.12px;font-size:13.8px;color:#3b3a39;letter-spacing:0.680px;">Find &amp;</div>
<div class="t" style="left:1631.20px;top:72.42px;font-size:13.8px;color:#3b3a39;letter-spacing:0.240px;">Select</div>
<svg class="abs" style="left:1675.1px;top:74.7px" width="8.6" height="5.6" viewBox="-1 -1 8.6 5.6"><path d="M0 0L3.3 3.6L6.6 0" fill="none" stroke="#3b3a39" stroke-width="1.3" stroke-linecap="round" stroke-linejoin="round"/></svg>
<div class="t" style="left:1553.30px;top:102.17px;font-size:12.2px;color:#444;letter-spacing:0.317px;">Editing</div>
<div class="abs" style="left:1697.3px;top:4.5px;width:1px;height:108.0px;background:#c6c4c2"></div>
<svg class="abs" style="left:1715px;top:5px" width="43" height="42" viewBox="0 0 43 42">
<rect x="1.500" y="1.500" width="39" height="38.500" fill="#fff" stroke="#444" stroke-width="1.500"/>
<rect x="2.200" y="2.200" width="37.600" height="4.300" fill="#bdbdbd"/>
<path d="M1.500 6.800h39M1.500 18h39M1.500 29h39M14.500 6.800V40M27.500 6.800V40" fill="none" stroke="#c8c8c8" stroke-width="1.200"/>
<path d="M1.500 18h3M1.500 29h3M14.500 33v7M27.500 33v7M37 18h3.500M37 29h3.500" stroke="#666" stroke-width="1.300" fill="none"/>
<circle cx="19.300" cy="18" r="11.800" fill="#fff" stroke="#444" stroke-width="1.500"/>
<rect x="12.500" y="16.500" width="4" height="6.500" fill="#b5b5b5" stroke="#8a8a8a" stroke-width=".8"/><rect x="17.200" y="10.500" width="4" height="12.500" fill="#fff" stroke="#444" stroke-width="1.100"/><rect x="22" y="13.500" width="4" height="9.500" fill="#4f9fe0" stroke="#2b7fc7" stroke-width=".8"/>
<path d="M27.800 26.300l12.500 13" stroke="#444" stroke-width="1.800"/></svg>
<div class="t" style="left:1710.50px;top:52.02px;font-size:13.8px;color:#3b3a39;letter-spacing:0.300px;">Analyze</div>
<div class="t" style="left:1720.90px;top:71.82px;font-size:13.8px;color:#3b3a39;letter-spacing:0.400px;">Data</div>
<div class="t" style="left:1713.00px;top:102.17px;font-size:12.2px;color:#444;letter-spacing:0.014px;">Analysis</div>
<div class="abs" style="left:1774.4px;top:4.5px;width:1px;height:108.0px;background:#c6c4c2"></div>
<svg class="abs" style="left:1794px;top:7px" width="39" height="38" viewBox="0 0 39 38"><g fill="#fdf3ec" stroke="#cf7345" stroke-width="1.700"><rect x="1.500" y="1.500" width="35.500" height="35.500"/><rect x="6" y="6" width="11.500" height="11.500"/><rect x="21" y="6" width="11.500" height="11.500"/><rect x="6" y="21" width="11.500" height="11.500"/><rect x="21" y="21" width="11.500" height="11.500"/></g></svg>
<div class="t" style="left:1787.30px;top:52.02px;font-size:13.8px;color:#3b3a39;letter-spacing:0.783px;">Add-ins</div>
<div class="t" style="left:1790.20px;top:102.17px;font-size:12.2px;color:#444;letter-spacing:0.483px;">Add-ins</div>
<div class="abs" style="left:1851.5px;top:4.5px;width:1px;height:108.0px;background:#c6c4c2"></div>
<svg class="abs" style="left:1894px;top:105px" width="14" height="9" viewBox="0 0 14 9"><path d="M1.200 7.700L7 1.800l5.800 5.900" fill="none" stroke="#333" stroke-width="1.400"/></svg>
</div>
<div id="shadow"></div>
<div id="formula">
<div class="abs" style="left:4px;top:7px;width:127px;height:30px;background:#fff;border:1px solid #c6c6c6"></div>
<div class="t" style="left:11.50px;top:14.88px;font-size:15.5px;color:#333;letter-spacing:-0.650px;">G25</div>
<svg class="abs" style="left:113px;top:19px" width="10" height="6" viewBox="0 0 10 6"><path d="M1 1h8L5 5.200z" fill="#666"/></svg>
<div class="abs" style="left:148px;top:15.0px;width:3px;height:3px;background:#b8b8b8;border-radius:1px"></div>
<div class="abs" style="left:148px;top:20.5px;width:3px;height:3px;background:#b8b8b8;border-radius:1px"></div>
<div class="abs" style="left:148px;top:26.0px;width:3px;height:3px;background:#b8b8b8;border-radius:1px"></div>
<div class="abs" style="left:168px;top:7px;width:137px;height:30px;background:#fff;border:1px solid #c6c6c6"></div>
<svg class="abs" style="left:183px;top:15px" width="16" height="15" viewBox="0 0 16 15"><path d="M1.500 1.500l12 11.500M13.500 1.500l-12 11.500" stroke="#c4c4c4" stroke-width="1.600" fill="none"/></svg>
<svg class="abs" style="left:227px;top:15px" width="19" height="15" viewBox="0 0 19 15"><path d="M1.500 8.500l5 5L17 1.500" stroke="#c4c4c4" stroke-width="2" fill="none"/></svg>
<div class="t" style="left:272.50px;top:11.59px;font-size:19px;color:#6b6b6b;font-weight:bold;font-style:italic;font-family:'Liberation Serif',serif;">f</div>
<div class="t" style="left:279.70px;top:17.19px;font-size:13.5px;color:#6b6b6b;font-weight:bold;font-style:italic;font-family:'Liberation Serif',serif;">x</div>
<div class="abs" style="left:308px;top:7px;width:1602px;height:30px;background:#fff;border:1px solid #c6c6c6;border-right:0"></div>
<svg class="abs" style="left:1895px;top:18px" width="12" height="8" viewBox="0 0 12 8"><path d="M1.500 1.500l4.500 4.500 4.500-4.500" stroke="#333" stroke-width="1.800" fill="none"/></svg>
</div>
<div id="grid">
<div class="abs" style="left:0;top:0;width:1910px;height:24px;background:#e6e6e6"></div>
<div class="abs" style="left:0;top:0;width:35px;height:838px;background:#e6e6e6"></div>
<svg class="abs" style="left:12px;top:3px" width="20" height="19" viewBox="0 0 20 19"><path d="M19 1V18H1Z" fill="#b5b5b5"/></svg>
<div class="ch" style="left:35px;width:330px">A</div>
<div class="ch" style="left:365px;width:171px">B</div>
<div class="ch" style="left:536px;width:102px">C</div>
<div class="ch" style="left:638px;width:197px">D</div>
<div class="ch" style="left:835px;width:197px">E</div>
<div class="ch" style="left:1032px;width:141px">F</div>
<div class="ch" style="left:1173px;width:141px">G</div>
<div class="ch" style="left:1314px;width:141px">H</div>
<div class="ch" style="left:1455px;width:141px">I</div>
<div class="ch" style="left:1596px;width:141px">J</div>
<div class="ch" style="left:1737px;width:141px">K</div>
<div class="abs" style="left:365px;top:0px;width:1px;height:24px;background:#7d7d7d"></div>
<div class="abs" style="left:536px;top:0px;width:1px;height:24px;background:#b1b1b1"></div>
<div class="abs" style="left:638px;top:0px;width:1px;height:24px;background:#b1b1b1"></div>
<div class="abs" style="left:835px;top:0px;width:1px;height:24px;background:#b1b1b1"></div>
<div class="abs" style="left:1032px;top:0px;width:1px;height:24px;background:#b1b1b1"></div>
<div class="abs" style="left:1173px;top:0px;width:1px;height:24px;background:#b1b1b1"></div>
<div class="abs" style="left:1314px;top:0px;width:1px;height:24px;background:#b1b1b1"></div>
<div class="abs" style="left:1455px;top:0px;width:1px;height:24px;background:#b1b1b1"></div>
<div class="abs" style="left:1596px;top:0px;width:1px;height:24px;background:#b1b1b1"></div>
<div class="abs" style="left:1737px;top:0px;width:1px;height:24px;background:#b1b1b1"></div>
<div class="abs" style="left:1878px;top:0px;width:1px;height:24px;background:#b1b1b1"></div>
<div class="abs" style="left:0;top:23px;width:1893px;height:1px;background:#b1b1b1"></div>
<div class="abs" style="left:34px;top:0;width:1px;height:838px;background:#b8b8b8"></div>
<div class="rh" style="top:25px;height:26px"><span>1</span></div>
<div class="rh" style="top:51px;height:26px"><span>2</span></div>
<div class="rh" style="top:77px;height:26px"><span>3</span></div>
<div class="rh" style="top:103px;height:26px"><span>4</span></div>
<div class="rh" style="top:129px;height:109px"><span>5</span></div>
<div class="rh" style="top:238px;height:79px"><span>6</span></div>
<div class="rh" style="top:317px;height:26px"><span>7</span></div>
<div class="rh" style="top:343px;height:26px"><span>8</span></div>
<div class="rh" style="top:369px;height:26px"><span>9</span></div>
<div class="rh" style="top:395px;height:26px"><span>10</span></div>
<div class="rh" style="top:421px;height:26px"><span>11</span></div>
<div class="rh" style="top:447px;height:26px"><span>12</span></div>
<div class="rh" style="top:473px;height:26px"><span>13</span></div>
<div class="rh" style="top:499px;height:26px"><span>14</span></div>
<div class="rh" style="top:525px;height:26px"><span>15</span></div>
<div class="rh" style="top:551px;height:26px"><span>16</span></div>
<div class="rh" style="top:577px;height:26px"><span>17</span></div>
<div class="rh" style="top:603px;height:26px"><span>18</span></div>
<div class="rh" style="top:629px;height:26px"><span>19</span></div>
<div class="rh" style="top:655px;height:26px"><span>20</span></div>
<div class="rh" style="top:681px;height:26px"><span>21</span></div>
<div class="rh" style="top:707px;height:26px"><span>22</span></div>
<div class="rh" style="top:733px;height:26px"><span>23</span></div>
<div class="rh" style="top:759px;height:26px"><span>24</span></div>
<div class="rh" style="top:785px;height:26px"><span>25</span></div>
<div class="rh" style="top:811px;height:26px"><span>26</span></div>
<div class="abs" style="left:35px;top:24px;width:1858px;height:213px;background:#8ea9db"></div>
<div class="abs" style="left:35px;top:237px;width:997px;height:79px;background:#ddebf7"></div>
<div class="abs" style="left:1032px;top:237px;width:846px;height:79px;background:#bdd7ee"></div>
<div class="abs" style="left:1878px;top:237px;width:15px;height:79px;background:#9bc2e6"></div>
<div class="abs" style="left:35px;top:316px;width:1858px;height:26px;background:#d9e1f2"></div>
<div class="abs" style="left:35px;top:368px;width:1858px;height:26px;background:#d9e1f2"></div>
<div class="abs" style="left:35px;top:420px;width:1858px;height:26px;background:#d9e1f2"></div>
<div class="abs" style="left:35px;top:472px;width:1858px;height:26px;background:#d9e1f2"></div>
<div class="abs" style="left:35px;top:524px;width:1858px;height:26px;background:#d9e1f2"></div>
<div class="abs" style="left:35px;top:602px;width:1858px;height:1px;background:#dadada"></div>
<div class="abs" style="left:35px;top:628px;width:1858px;height:1px;background:#dadada"></div>
<div class="abs" style="left:35px;top:654px;width:1858px;height:1px;background:#dadada"></div>
<div class="abs" style="left:35px;top:680px;width:1858px;height:1px;background:#dadada"></div>
<div class="abs" style="left:35px;top:706px;width:1858px;height:1px;background:#dadada"></div>
<div class="abs" style="left:35px;top:732px;width:1858px;height:1px;background:#dadada"></div>
<div class="abs" style="left:35px;top:758px;width:1858px;height:1px;background:#dadada"></div>
<div class="abs" style="left:35px;top:784px;width:1858px;height:1px;background:#dadada"></div>
<div class="abs" style="left:35px;top:810px;width:1858px;height:1px;background:#dadada"></div>
<div class="abs" style="left:35px;top:836px;width:1858px;height:1px;background:#dadada"></div>
<div class="abs" style="left:365px;top:602px;width:1px;height:234px;background:#dadada"></div>
<div class="abs" style="left:536px;top:602px;width:1px;height:234px;background:#dadada"></div>
<div class="abs" style="left:638px;top:602px;width:1px;height:234px;background:#dadada"></div>
<div class="abs" style="left:835px;top:602px;width:1px;height:234px;background:#dadada"></div>
<div class="abs" style="left:1032px;top:602px;width:1px;height:234px;background:#dadada"></div>
<div class="abs" style="left:1173px;top:602px;width:1px;height:234px;background:#dadada"></div>
<div class="abs" style="left:1314px;top:602px;width:1px;height:234px;background:#dadada"></div>
<div class="abs" style="left:1455px;top:602px;width:1px;height:234px;background:#dadada"></div>
<div class="abs" style="left:1596px;top:602px;width:1px;height:234px;background:#dadada"></div>
<div class="abs" style="left:1737px;top:602px;width:1px;height:234px;background:#dadada"></div>
<div class="abs" style="left:1878px;top:602px;width:1px;height:234px;background:#dadada"></div>
<div class="abs" style="left:35px;top:342px;width:1858px;height:1px;background:#4d6c96"></div>
<div class="abs" style="left:35px;top:368px;width:1858px;height:1px;background:#4d6c96"></div>
<div class="abs" style="left:35px;top:394px;width:1858px;height:1px;background:#4d6c96"></div>
<div class="abs" style="left:35px;top:420px;width:1858px;height:1px;background:#4d6c96"></div>
<div class="abs" style="left:35px;top:446px;width:1858px;height:1px;background:#4d6c96"></div>
<div class="abs" style="left:35px;top:472px;width:1858px;height:1px;background:#4d6c96"></div>
<div class="abs" style="left:35px;top:498px;width:1858px;height:1px;background:#4d6c96"></div>
<div class="abs" style="left:35px;top:524px;width:1858px;height:1px;background:#4d6c96"></div>
<div class="abs" style="left:35px;top:550px;width:1858px;height:1px;background:#4d6c96"></div>
<div class="abs" style="left:35px;top:575px;width:1858px;height:1px;background:#4d6c96"></div>
<div class="abs" style="left:35px;top:577px;width:1858px;height:1px;background:#4d6c96"></div>
<div class="abs" style="left:35px;top:602px;width:1858px;height:1px;background:#4d6c96"></div>
<div class="abs" style="left:35px;top:237px;width:1858px;height:1px;background:#5b7db5"></div>
<div class="abs" style="left:365px;top:237px;width:1px;height:365px;background:#64788f"></div>
<div class="abs" style="left:536px;top:237px;width:1px;height:365px;background:#4d6c96"></div>
<div class="abs" style="left:638px;top:237px;width:1px;height:365px;background:#4d6c96"></div>
<div class="abs" style="left:835px;top:237px;width:1px;height:365px;background:#4d6c96"></div>
<div class="abs" style="left:1032px;top:237px;width:1px;height:365px;background:#4d6c96"></div>
<div class="abs" style="left:1173px;top:237px;width:1px;height:365px;background:#4d6c96"></div>
<div class="abs" style="left:1314px;top:237px;width:1px;height:365px;background:#4d6c96"></div>
<div class="abs" style="left:1455px;top:237px;width:1px;height:365px;background:#4d6c96"></div>
<div class="abs" style="left:1596px;top:237px;width:1px;height:365px;background:#4d6c96"></div>
<div class="abs" style="left:1737px;top:237px;width:1px;height:365px;background:#4d6c96"></div>
<div class="abs" style="left:1878px;top:237px;width:1px;height:365px;background:#4d6c96"></div>
<div class="abs" style="left:35px;top:315px;width:1858px;height:1px;background:rgba(20,28,48,.55)"></div>
<div class="abs" style="left:35px;top:316px;width:1858px;height:1px;background:#141c30"></div>
<div class="abs" style="left:365px;top:24px;width:1px;height:213px;background:#7f96c0"></div>
<div class="abs" style="left:365px;top:602px;width:1px;height:234px;background:#9a9a9a"></div>
<div class="t" style="left:128.70px;top:295.43px;font-size:16.5px;color:#0a0a0a;letter-spacing:0.420px;font-weight:bold;">Property Address</div>
<div class="t" style="left:414.50px;top:269.63px;font-size:16.5px;color:#0a0a0a;letter-spacing:0.643px;font-weight:bold;">Property</div>
<div class="t" style="left:435.00px;top:295.43px;font-size:16.5px;color:#0a0a0a;letter-spacing:0.200px;font-weight:bold;">City</div>
<div class="t" style="left:551.90px;top:269.63px;font-size:16.5px;color:#0a0a0a;letter-spacing:0.600px;font-weight:bold;">Property</div>
<div class="t" style="left:566.40px;top:295.43px;font-size:16.5px;color:#0a0a0a;letter-spacing:0.375px;font-weight:bold;">State</div>
<div class="t" style="left:713.30px;top:295.43px;font-size:16.5px;color:#0a0a0a;letter-spacing:0.225px;font-weight:bold;">Buyer</div>
<div class="t" style="left:910.20px;top:295.43px;font-size:16.5px;color:#0a0a0a;letter-spacing:0.450px;font-weight:bold;">Agent</div>
<div class="t" style="left:1076.80px;top:243.93px;font-size:16.5px;color:#0a0a0a;letter-spacing:-0.160px;font-weight:bold;">Escrow</div>
<div class="t" style="left:1078.40px;top:269.63px;font-size:16.5px;color:#0a0a0a;font-weight:bold;">Funds</div>
<div class="t" style="left:1084.80px;top:295.43px;font-size:16.5px;color:#0a0a0a;letter-spacing:0.500px;font-weight:bold;">Held</div>
<div class="t" style="left:1217.70px;top:243.93px;font-size:16.5px;color:#0a0a0a;letter-spacing:-0.140px;font-weight:bold;">Escrow</div>
<div class="t" style="left:1209.70px;top:269.63px;font-size:16.5px;color:#0a0a0a;letter-spacing:0.400px;font-weight:bold;">Transfer</div>
<div class="t" style="left:1200.00px;top:295.43px;font-size:16.5px;color:#0a0a0a;letter-spacing:0.633px;font-weight:bold;">(Software)</div>
<div class="t" style="left:1358.70px;top:243.93px;font-size:16.5px;color:#0a0a0a;letter-spacing:-0.200px;font-weight:bold;">Escrow</div>
<div class="t" style="left:1350.70px;top:269.63px;font-size:16.5px;color:#0a0a0a;letter-spacing:0.443px;font-weight:bold;">Transfer</div>
<div class="t" style="left:1358.30px;top:295.43px;font-size:16.5px;color:#0a0a0a;letter-spacing:0.320px;font-weight:bold;">(Bank)</div>
<div class="t" style="left:1477.90px;top:269.63px;font-size:16.5px;color:#0a0a0a;letter-spacing:0.111px;font-weight:bold;">Commission</div>
<div class="t" style="left:1489.80px;top:295.43px;font-size:16.5px;color:#0a0a0a;letter-spacing:0.657px;font-weight:bold;">Paid Out</div>
<div class="t" style="left:1641.70px;top:269.63px;font-size:16.5px;color:#0a0a0a;letter-spacing:0.320px;font-weight:bold;">Broker</div>
<div class="t" style="left:1636.00px;top:295.43px;font-size:16.5px;color:#0a0a0a;letter-spacing:0.540px;font-weight:bold;">Income</div>
<div class="t" style="left:1781.30px;top:269.63px;font-size:16.5px;color:#0a0a0a;letter-spacing:-0.140px;font-weight:bold;">Escrow</div>
<div class="t" style="left:1775.60px;top:295.43px;font-size:16.5px;color:#0a0a0a;letter-spacing:0.083px;font-weight:bold;">Balance</div>
<div class="fb" style="left:344px;top:294px"><i></i></div>
<div class="fb" style="left:515px;top:294px"><i></i></div>
<div class="fb" style="left:617px;top:294px"><i></i></div>
<div class="fb" style="left:814px;top:294px"><i></i></div>
<div class="fb" style="left:1011px;top:294px"><i></i></div>
<div class="fb" style="left:1152px;top:294px"><i></i></div>
<div class="fb" style="left:1293px;top:294px"><i></i></div>
<div class="fb" style="left:1434px;top:294px"><i></i></div>
<div class="fb" style="left:1575px;top:294px"><i></i></div>
<div class="fb" style="left:1716px;top:294px"><i></i></div>
<div class="fb" style="left:1857px;top:294px"><i></i></div>
<div class="dl" style="left:1041.5px;top:318.5px">$</div>
<div class="ds" style="left:1137.5px;top:320.5px">-</div>
<div class="dl" style="left:1182.5px;top:318.5px">$</div>
<div class="ds" style="left:1278.5px;top:320.5px">-</div>
<div class="dl" style="left:1323.5px;top:318.5px">$</div>
<div class="ds" style="left:1419.5px;top:320.5px">-</div>
<div class="dl" style="left:1464.5px;top:318.5px">$</div>
<div class="ds" style="left:1560.5px;top:320.5px">-</div>
<div class="dl" style="left:1605.5px;top:318.5px">$</div>
<div class="ds" style="left:1701.5px;top:320.5px">-</div>
<div class="dl" style="left:1746.5px;top:318.5px">$</div>
<div class="ds" style="left:1842.5px;top:320.5px">-</div>
<div class="dl" style="left:1041.5px;top:344.5px">$</div>
<div class="ds" style="left:1137.5px;top:346.5px">-</div>
<div class="dl" style="left:1182.5px;top:344.5px">$</div>
<div class="ds" style="left:1278.5px;top:346.5px">-</div>
<div class="dl" style="left:1323.5px;top:344.5px">$</div>
<div class="ds" style="left:1419.5px;top:346.5px">-</div>
<div class="dl" style="left:1464.5px;top:344.5px">$</div>
<div class="ds" style="left:1560.5px;top:346.5px">-</div>
<div class="dl" style="left:1605.5px;top:344.5px">$</div>
<div class="ds" style="left:1701.5px;top:346.5px">-</div>
<div class="dl" style="left:1746.5px;top:344.5px">$</div>
<div class="ds" style="left:1842.5px;top:346.5px">-</div>
<div class="dl" style="left:1041.5px;top:370.5px">$</div>
<div class="ds" style="left:1137.5px;top:372.5px">-</div>
<div class="dl" style="left:1182.5px;top:370.5px">$</div>
<div class="ds" style="left:1278.5px;top:372.5px">-</div>
<div class="dl" style="left:1323.5px;top:370.5px">$</div>
<div class="ds" style="left:1419.5px;top:372.5px">-</div>
<div class="dl" style="left:1464.5px;top:370.5px">$</div>
<div class="ds" style="left:1560.5px;top:372.5px">-</div>
<div class="dl" style="left:1605.5px;top:370.5px">$</div>
<div class="ds" style="left:1701.5px;top:372.5px">-</div>
<div class="dl" style="left:1746.5px;top:370.5px">$</div>
<div class="ds" style="left:1842.5px;top:372.5px">-</div>
<div class="dl" style="left:1041.5px;top:396.5px">$</div>
<div class="ds" style="left:1137.5px;top:398.5px">-</div>
<div class="dl" style="left:1182.5px;top:396.5px">$</div>
<div class="ds" style="left:1278.5px;top:398.5px">-</div>
<div class="dl" style="left:1323.5px;top:396.5px">$</div>
<div class="ds" style="left:1419.5px;top:398.5px">-</div>
<div class="dl" style="left:1464.5px;top:396.5px">$</div>
<div class="ds" style="left:1560.5px;top:398.5px">-</div>
<div class="dl" style="left:1605.5px;top:396.5px">$</div>
<div class="ds" style="left:1701.5px;top:398.5px">-</div>
<div class="dl" style="left:1746.5px;top:396.5px">$</div>
<div class="ds" style="left:1842.5px;top:398.5px">-</div>
<div class="dl" style="left:1041.5px;top:422.5px">$</div>
<div class="ds" style="left:1137.5px;top:424.5px">-</div>
<div class="dl" style="left:1182.5px;top:422.5px">$</div>
<div class="ds" style="left:1278.5px;top:424.5px">-</div>
<div class="dl" style="left:1323.5px;top:422.5px">$</div>
<div class="ds" style="left:1419.5px;top:424.5px">-</div>
<div class="dl" style="left:1464.5px;top:422.5px">$</div>
<div class="ds" style="left:1560.5px;top:424.5px">-</div>
<div class="dl" style="left:1605.5px;top:422.5px">$</div>
<div class="ds" style="left:1701.5px;top:424.5px">-</div>
<div class="dl" style="left:1746.5px;top:422.5px">$</div>
<div class="ds" style="left:1842.5px;top:424.5px">-</div>
<div class="dl" style="left:1041.5px;top:448.5px">$</div>
<div class="ds" style="left:1137.5px;top:450.5px">-</div>
<div class="dl" style="left:1182.5px;top:448.5px">$</div>
<div class="ds" style="left:1278.5px;top:450.5px">-</div>
<div class="dl" style="left:1323.5px;top:448.5px">$</div>
<div class="ds" style="left:1419.5px;top:450.5px">-</div>
<div class="dl" style="left:1464.5px;top:448.5px">$</div>
<div class="ds" style="left:1560.5px;top:450.5px">-</div>
<div class="dl" style="left:1605.5px;top:448.5px">$</div>
<div class="ds" style="left:1701.5px;top:450.5px">-</div>
<div class="dl" style="left:1746.5px;top:448.5px">$</div>
<div class="ds" style="left:1842.5px;top:450.5px">-</div>
<div class="dl" style="left:1041.5px;top:474.5px">$</div>
<div class="ds" style="left:1137.5px;top:476.5px">-</div>
<div class="dl" style="left:1182.5px;top:474.5px">$</div>
<div class="ds" style="left:1278.5px;top:476.5px">-</div>
<div class="dl" style="left:1323.5px;top:474.5px">$</div>
<div class="ds" style="left:1419.5px;top:476.5px">-</div>
<div class="dl" style="left:1464.5px;top:474.5px">$</div>
<div class="ds" style="left:1560.5px;top:476.5px">-</div>
<div class="dl" style="left:1605.5px;top:474.5px">$</div>
<div class="ds" style="left:1701.5px;top:476.5px">-</div>
<div class="dl" style="left:1746.5px;top:474.5px">$</div>
<div class="ds" style="left:1842.5px;top:476.5px">-</div>
<div class="dl" style="left:1041.5px;top:500.5px">$</div>
<div class="ds" style="left:1137.5px;top:502.5px">-</div>
<div class="dl" style="left:1182.5px;top:500.5px">$</div>
<div class="ds" style="left:1278.5px;top:502.5px">-</div>
<div class="dl" style="left:1323.5px;top:500.5px">$</div>
<div class="ds" style="left:1419.5px;top:502.5px">-</div>
<div class="dl" style="left:1464.5px;top:500.5px">$</div>
<div class="ds" style="left:1560.5px;top:502.5px">-</div>
<div class="dl" style="left:1605.5px;top:500.5px">$</div>
<div class="ds" style="left:1701.5px;top:502.5px">-</div>
<div class="dl" style="left:1746.5px;top:500.5px">$</div>
<div class="ds" style="left:1842.5px;top:502.5px">-</div>
<div class="dl" style="left:1041.5px;top:526.5px">$</div>
<div class="ds" style="left:1137.5px;top:528.5px">-</div>
<div class="dl" style="left:1182.5px;top:526.5px">$</div>
<div class="ds" style="left:1278.5px;top:528.5px">-</div>
<div class="dl" style="left:1323.5px;top:526.5px">$</div>
<div class="ds" style="left:1419.5px;top:528.5px">-</div>
<div class="dl" style="left:1464.5px;top:526.5px">$</div>
<div class="ds" style="left:1560.5px;top:528.5px">-</div>
<div class="dl" style="left:1605.5px;top:526.5px">$</div>
<div class="ds" style="left:1701.5px;top:528.5px">-</div>
<div class="dl" style="left:1746.5px;top:526.5px">$</div>
<div class="ds" style="left:1842.5px;top:528.5px">-</div>
<div class="dl" style="left:1041.5px;top:552.5px">$</div>
<div class="ds" style="left:1137.5px;top:554.5px">-</div>
<div class="dl" style="left:1182.5px;top:552.5px">$</div>
<div class="ds" style="left:1278.5px;top:554.5px">-</div>
<div class="dl" style="left:1323.5px;top:552.5px">$</div>
<div class="ds" style="left:1419.5px;top:554.5px">-</div>
<div class="dl" style="left:1464.5px;top:552.5px">$</div>
<div class="ds" style="left:1560.5px;top:554.5px">-</div>
<div class="dl" style="left:1605.5px;top:552.5px">$</div>
<div class="ds" style="left:1701.5px;top:554.5px">-</div>
<div class="dl" style="left:1746.5px;top:552.5px">$</div>
<div class="ds" style="left:1842.5px;top:554.5px">-</div>
<div class="dl b" style="left:1041.5px;top:578.5px">$</div>
<div class="ds b" style="left:1137.5px;top:580px">-</div>
<div class="dl b" style="left:1605.5px;top:578.5px">$</div>
<div class="ds b" style="left:1701.5px;top:580px">-</div>
<div class="abs" style="left:1893px;top:0;width:17px;height:838px;background:#e6e6e6"></div>
<div class="abs" style="left:1892px;top:24px;width:1px;height:814px;background:#b4b4b4"></div>
<div class="abs" style="left:1896px;top:2px;width:14px;height:836px;background:#f0f0f0"></div>
<div class="abs" style="left:1896px;top:2px;width:15px;height:790px;background:#fff;border:1px solid #ababab"></div>
<div class="abs" style="left:1896px;top:2px;width:15px;height:18px;background:#fff;border:1px solid #ababab"></div>
<svg class="abs" style="left:1899px;top:8px" width="11" height="6"><path d="M0 6L5.5 0L11 6Z" fill="#222"/></svg>
<div class="abs" style="left:1896px;top:819px;width:15px;height:19px;background:#fff;border:1px solid #ababab"></div>
<svg class="abs" style="left:1899px;top:826px" width="11" height="6"><path d="M0 0L5.5 6L11 0Z" fill="#222"/></svg>
<div class="abs" style="left:0;top:837px;width:1893px;height:1px;background:#b8b8b8"></div>
<svg class="abs" style="left:0;top:0" width="1910" height="838" viewBox="0 0 1910 838"><path fill="#0c0f1a" d="M634.0 71.4L633.2 74.0 632.0 77.5 630.7 81.6 629.5 85.5 628.3 89.3 627.1 93.1 625.9 97.0 624.8 100.8 623.6 104.7 622.4 108.5 621.2 112.4 620.2 116.3 619.2 120.2 618.4 124.1 617.6 127.9 616.8 131.9 616.0 136.0 615.2 140.3 614.4 144.5 613.7 148.4 613.0 151.8 612.5 154.9 612.0 157.9 611.7 160.7 611.8 163.4 612.1 166.0 612.5 168.0 612.7 169.4A2.5 2.5 0 0 0 617.6 168.4L617.3 167.0 616.9 165.1 616.6 163.0 616.4 160.7 616.5 158.3 616.8 155.5 617.2 152.5 617.8 149.1 618.5 145.3 619.3 141.1 620.2 136.9 621.2 132.8 622.2 129.0 623.2 125.2 624.3 121.6 625.5 117.8 626.7 114.1 628.0 110.4 629.4 106.6 630.7 102.8 632.0 98.9 633.3 95.1 634.6 91.3 635.8 87.5 637.0 83.6 638.2 79.4 639.2 75.8 640.0 73.3A3.1 3.1 0 0 0 634.0 71.4ZM606.9 123.4L608.1 123.9 609.9 124.6 612.0 125.3 614.2 125.8 616.2 126.1 618.3 126.3 620.7 126.3 623.6 125.9 627.2 125.2 631.2 124.2 635.4 122.9 639.3 121.4 643.0 119.6 646.5 117.6 649.8 115.4 652.9 113.1 655.9 110.8 658.7 108.4 661.3 105.8 663.5 103.2 665.4 100.6 666.9 97.8 668.0 94.9 668.5 92.0 668.0 89.0 666.8 86.3 665.2 84.1 663.4 82.3 661.3 80.9 658.9 80.0 656.4 79.5 653.8 79.6 651.1 80.1 648.4 81.2 645.8 82.6 643.3 84.3 640.9 86.5 638.6 89.1 636.5 91.8 634.5 94.7 632.6 97.9 630.7 101.5 629.2 104.7 628.1 106.9A0.8 0.8 0 0 0 629.6 107.6L630.7 105.4 632.3 102.3 634.3 98.9 636.2 95.8 638.2 93.2 640.4 90.6 642.7 88.3 644.9 86.6 647.2 85.3 649.7 84.4 652.0 83.8 654.0 83.7 655.7 84.0 657.2 84.6 658.6 85.4 659.7 86.4 660.6 87.7 661.5 89.2 662.0 90.7 662.2 92.0 662.1 93.6 661.7 95.7 660.8 98.1 659.6 100.4 657.9 102.8 655.7 105.3 653.2 107.8 650.5 110.1 647.6 112.4 644.6 114.6 641.3 116.6 638.0 118.2 634.3 119.5 630.3 120.6 626.4 121.3 623.1 121.8 620.6 121.9 618.7 121.7 616.9 121.4 615.1 121.0 613.1 120.7 611.2 120.2 609.4 119.8 608.2 119.5A2.1 2.1 0 0 0 606.9 123.4ZM622.9 126.4L625.7 127.1 629.7 128.1 634.1 129.2 638.1 130.5 641.4 131.9 644.7 133.4 647.9 135.1 650.7 136.8 653.4 138.5 655.8 140.4 658.0 142.2 659.9 144.0 661.4 145.7 662.7 147.3 663.7 148.9 664.5 150.2 665.0 151.1 665.2 151.8 665.4 152.5 665.6 153.1A2.8 2.8 0 0 0 671.0 151.9L670.9 151.3 670.8 150.3 670.3 148.8 669.5 147.2 668.3 145.6 666.9 143.9 665.2 142.2 663.2 140.4 660.9 138.6 658.4 136.9 655.6 135.1 652.7 133.4 649.6 131.8 646.3 130.2 642.8 128.6 639.2 127.2 635.1 125.9 630.6 124.7 626.6 123.7 623.8 123.0A1.7 1.7 0 0 0 622.9 126.4ZM670.6 123.2L672.0 122.6 674.1 121.7 676.4 120.6 678.5 119.5 680.2 118.3 681.9 116.9 683.4 115.4 684.4 113.9 684.7 112.1 684.2 110.4 683.1 109.2 681.8 108.4 680.3 108.0 678.6 107.9 676.7 108.1 674.8 108.7 672.8 109.6 670.7 110.9 668.7 112.5 666.9 114.4 665.5 116.5 664.4 118.8 663.7 121.3 663.5 123.8 664.1 126.2 665.3 128.3 667.2 130.1 669.5 131.2 672.2 131.4 675.1 131.1 677.9 130.5 680.6 129.6 683.0 128.6 685.4 127.3 687.6 126.0 689.5 124.7 691.2 123.3 692.7 121.9 694.0 120.7 694.8 119.9A0.8 0.8 0 0 0 693.7 118.6L692.8 119.4 691.4 120.4 689.8 121.5 688.1 122.6 686.2 123.6 684.0 124.7 681.8 125.7 679.6 126.3 677.2 126.7 674.6 127.0 672.4 126.9 671.0 126.5 670.3 126.0 669.8 125.2 669.5 124.3 669.3 123.4 669.5 122.4 669.9 120.8 670.6 119.1 671.4 117.6 672.4 116.2 673.8 114.7 675.3 113.4 676.6 112.4 677.8 111.9 678.9 111.6 679.9 111.5 680.5 111.6 680.9 111.8 681.1 112.1 681.2 112.4 681.2 112.7 680.8 113.6 679.9 115.0 678.7 116.6 677.3 117.9 675.6 119.1 673.4 120.3 671.4 121.2 669.9 121.8A0.8 0.8 0 0 0 670.6 123.2ZM716.2 112.4L715.4 111.7 714.3 110.6 712.9 109.3 711.2 108.4 709.5 107.8 707.7 107.3 705.6 107.2 703.5 107.4 701.4 108.1 699.3 109.1 697.4 110.5 695.6 112.0 693.9 113.9 692.4 116.2 691.2 118.5 690.4 121.0 690.5 123.4 691.3 125.7 692.6 127.5 694.4 128.8 696.5 129.1 698.6 128.8 700.6 128.1 702.6 127.0 704.5 125.5 706.5 123.7 708.5 121.7 710.2 120.0 711.8 118.3 713.4 116.7 714.7 115.4 715.6 114.4A0.8 0.8 0 0 0 714.4 113.2L713.4 114.2 712.1 115.5 710.5 117.0 708.9 118.6 707.0 120.2 705.0 122.0 703.0 123.5 701.2 124.6 699.6 125.2 698.0 125.4 696.8 125.3 696.3 125.0 696.1 124.6 695.9 123.8 695.8 122.8 695.9 121.9 696.3 120.7 697.2 119.0 698.3 117.1 699.5 115.6 700.7 114.3 702.0 113.1 703.4 112.1 704.6 111.4 705.9 111.2 707.2 111.1 708.7 111.3 710.0 111.6 711.3 112.0 712.7 112.8 714.0 113.5 714.9 114.1A1.0 1.0 0 0 0 716.2 112.4ZM713.7 113.4L713.2 114.6 712.5 116.2 711.7 118.2 711.3 120.1 711.1 121.9 711.1 123.8 711.4 125.7 712.1 127.4 713.3 128.8 714.9 129.6 716.6 130.0 718.4 129.9 720.3 129.5 722.3 128.8 724.5 127.7 726.6 126.3 728.9 124.2 731.4 121.7 733.7 119.3 735.2 117.7A0.8 0.8 0 0 0 734.0 116.5L732.4 118.0 730.0 120.3 727.5 122.5 725.2 124.2 723.2 125.3 721.3 126.0 719.5 126.4 718.1 126.5 717.1 126.4 716.4 126.1 715.9 125.7 715.7 125.3 715.5 124.7 715.4 123.5 715.4 122.1 715.4 120.6 715.5 119.0 715.8 117.2 716.1 115.4 716.3 114.2A1.4 1.4 0 0 0 713.7 113.4ZM735.3 117.6L736.7 115.7 738.7 113.0 740.9 109.8 743.1 106.7 745.1 103.5 747.2 100.2 749.2 96.8 751.0 93.7 752.6 90.6 754.1 87.6 755.4 84.9 756.4 82.8 757.0 81.4 757.3 80.3 757.4 79.6 757.4 79.4A2.1 2.1 0 0 0 753.3 79.5L753.3 79.9 753.4 80.0 753.5 80.4 753.2 81.6 752.4 83.7 751.4 86.4 750.2 89.4 748.8 92.5 747.2 95.7 745.3 99.1 743.3 102.5 741.4 105.6 739.4 108.8 737.2 111.9 735.3 114.7 733.9 116.6A0.8 0.8 0 0 0 735.3 117.6ZM753.5 78.6L752.5 80.0 751.2 82.1 749.7 84.6 748.2 87.4 746.6 90.6 745.0 94.1 743.4 97.9 741.8 101.7 740.2 105.5 738.6 109.5 737.1 113.4 735.6 117.3 734.3 121.1 733.1 124.9 732.0 128.5 731.1 131.8 730.4 134.8 729.9 137.5 729.6 139.9 729.6 142.3 730.0 144.5 730.7 146.6 731.8 148.3 733.4 149.5 735.3 149.9 737.1 149.5 738.9 148.6 740.7 147.4 742.5 145.9 744.5 143.9 746.4 141.7 748.3 139.4 750.2 137.1 752.2 134.7 754.1 132.2 756.0 129.5 757.9 126.5 759.8 123.1 761.4 120.1 762.6 118.0A0.8 0.8 0 0 0 761.2 117.3L760.1 119.4 758.4 122.4 756.5 125.7 754.7 128.7 752.9 131.2 751.0 133.7 749.0 136.1 747.1 138.4 745.1 140.5 743.1 142.6 741.2 144.3 739.4 145.6 737.8 146.5 736.4 146.9 735.3 147.0 734.8 146.8 734.3 146.3 733.7 145.2 733.3 143.7 733.1 142.1 733.1 140.2 733.5 138.1 734.1 135.6 734.8 132.9 735.9 129.8 737.2 126.3 738.6 122.7 740.1 119.1 741.8 115.4 743.5 111.6 745.3 107.8 747.1 104.1 748.9 100.4 750.7 96.7 752.4 93.2 753.8 90.0 755.0 87.1 755.9 84.3 756.7 82.0 757.2 80.3A2.1 2.1 0 0 0 753.5 78.6ZM827.7 99.9L828.3 99.2 829.2 98.1 830.3 96.7 831.3 95.0 832.2 93.0 833.2 90.7 834.2 88.2 834.8 85.6 835.1 83.0 835.2 80.3 834.9 77.6 834.3 75.2 833.1 73.0 831.4 71.1 829.4 69.6 826.9 68.7 824.3 68.6 821.5 69.2 818.6 70.3 815.8 71.9 812.9 74.1 810.0 77.0 807.3 80.0 805.0 83.0 803.1 85.9 801.4 88.9 800.1 91.9 799.4 95.0 799.5 97.9 800.3 100.5 801.6 102.8 803.2 104.7 805.4 106.1 807.7 106.9 810.0 107.4 812.3 107.7 814.7 107.8 817.2 107.8 819.3 107.7 820.8 107.6A1.9 1.9 0 0 0 820.6 103.7L819.1 103.7 817.1 103.8 814.8 103.8 812.8 103.6 810.9 103.2 809.1 102.6 807.5 101.9 806.6 101.1 805.8 100.0 805.2 98.7 804.9 97.2 804.9 95.6 805.4 93.6 806.3 91.1 807.6 88.5 809.2 85.8 811.1 82.9 813.4 79.9 815.8 77.1 818.1 75.0 820.3 73.5 822.6 72.4 824.7 71.8 826.5 71.7 828.1 72.1 829.7 73.1 831.2 74.5 832.3 76.1 832.9 78.0 833.2 80.4 833.2 82.9 832.9 85.3 832.2 87.5 831.1 89.7 829.9 91.7 828.7 93.3 827.6 94.4 826.5 95.1 825.4 95.7 824.6 96.1A2.4 2.4 0 0 0 827.7 99.9ZM812.7 105.5L811.2 106.6 809.0 108.3 806.5 110.3 803.8 112.7 801.1 115.6 798.2 118.9 795.2 122.4 792.4 125.7 789.8 129.0 787.3 132.4 785.0 135.6 783.0 138.7 781.3 141.4 779.9 144.1 778.8 146.8 778.3 149.8 778.7 152.8 779.8 155.6 781.5 158.1 783.7 160.1 786.4 161.3 789.3 161.9 792.3 161.9 795.4 161.5 798.4 160.7 801.5 159.3 804.6 157.7 807.7 155.8 810.9 153.6 814.0 151.2 817.3 148.5 820.7 145.5 824.4 142.0 828.4 138.2 832.3 134.3 836.0 130.7 839.5 127.6 842.8 124.8 846.0 122.2 849.0 119.9 851.9 117.9 854.7 116.3 857.0 114.9 858.7 113.9A0.8 0.8 0 0 0 858.0 112.6L856.3 113.6 853.9 114.9 851.0 116.6 848.1 118.6 845.1 120.9 841.8 123.6 838.4 126.5 834.9 129.6 831.2 133.1 827.3 137.1 823.4 140.9 819.6 144.3 816.1 147.1 812.8 149.6 809.6 151.8 806.4 153.6 803.3 155.2 800.3 156.4 797.4 157.3 794.8 157.7 792.3 157.7 790.0 157.4 788.1 156.7 786.8 155.9 785.9 154.7 785.2 153.2 784.7 151.4 784.6 149.8 784.7 148.3 785.3 146.3 786.3 144.0 787.6 141.3 789.2 138.2 791.1 134.9 793.3 131.5 795.5 128.1 798.0 124.6 800.8 121.1 803.5 117.7 806.0 114.9 808.4 112.6 810.9 110.6 813.0 109.1 814.5 107.9A1.5 1.5 0 0 0 812.7 105.5ZM858.9 112.3L857.8 112.1 856.2 111.8 854.2 111.6 852.1 111.9 850.0 112.7 847.8 113.8 845.6 115.5 844.2 118.2 844.5 121.2 845.8 123.5 847.3 125.4 848.8 127.3 850.4 129.3 852.2 131.2 853.8 133.1 855.1 134.9 856.1 136.9 856.9 138.9 857.3 140.7 857.4 142.0 857.2 143.2 856.6 144.8 855.6 146.4 854.5 147.8 853.0 149.0 851.1 150.1 849.0 150.9 847.2 151.4 845.5 151.5 843.7 151.3 842.0 150.8 840.8 150.3 840.2 150.0 839.9 149.7 839.7 149.3 839.7 148.5 839.9 147.5 840.3 146.2 841.3 144.7 842.7 142.8 844.8 140.5 847.4 137.8 850.4 135.0 853.4 132.4 856.5 130.0 859.8 127.6 863.1 125.4 866.4 123.2 870.0 121.0 873.7 118.8 877.1 116.9 879.5 115.6A0.8 0.8 0 0 0 878.7 114.2L876.3 115.6 873.0 117.5 869.2 119.7 865.6 121.9 862.2 124.1 858.9 126.4 855.6 128.8 852.4 131.2 849.3 133.8 846.3 136.6 843.5 139.2 841.3 141.5 839.6 143.4 838.3 144.9 837.3 146.4 836.7 147.8 836.4 149.4 836.7 151.0 837.5 152.5 838.8 153.7 840.5 154.6 842.7 155.3 845.1 155.8 847.7 155.8 850.3 155.4 853.0 154.5 855.6 153.3 857.9 151.8 859.9 150.0 861.6 147.8 863.0 145.2 863.6 142.4 863.3 139.4 862.3 136.7 860.9 134.3 859.5 132.0 857.8 129.8 855.8 127.8 854.1 126.0 852.6 124.3 851.4 122.5 850.3 120.7 849.7 119.5 849.6 119.3 849.8 119.0 850.8 117.9 852.3 116.7 853.7 115.7 854.8 115.1 856.3 114.7 857.8 114.4 858.9 114.2A1.0 1.0 0 0 0 858.9 112.3ZM1036.3 99.9L1036.9 99.2 1037.8 98.1 1038.9 96.7 1039.9 95.0 1040.8 93.0 1041.8 90.7 1042.8 88.2 1043.4 85.6 1043.7 83.0 1043.8 80.3 1043.5 77.6 1042.9 75.2 1041.7 73.0 1040.0 71.1 1038.0 69.6 1035.5 68.7 1032.9 68.6 1030.1 69.2 1027.2 70.3 1024.4 71.9 1021.5 74.1 1018.6 77.0 1015.9 80.0 1013.6 83.0 1011.7 85.9 1010.0 88.9 1008.7 91.9 1008.0 95.0 1008.1 97.9 1008.9 100.5 1010.2 102.8 1011.8 104.7 1014.0 106.1 1016.3 106.9 1018.6 107.4 1020.9 107.7 1023.3 107.8 1025.8 107.8 1027.9 107.7 1029.4 107.6A1.9 1.9 0 0 0 1029.2 103.7L1027.7 103.7 1025.7 103.8 1023.4 103.8 1021.4 103.6 1019.5 103.2 1017.7 102.6 1016.1 101.9 1015.2 101.1 1014.4 100.0 1013.8 98.7 1013.5 97.2 1013.5 95.6 1014.0 93.6 1014.9 91.1 1016.2 88.5 1017.8 85.8 1019.7 82.9 1022.0 79.9 1024.4 77.1 1026.7 75.0 1028.9 73.5 1031.2 72.4 1033.3 71.8 1035.1 71.7 1036.7 72.1 1038.3 73.1 1039.8 74.5 1040.9 76.1 1041.5 78.0 1041.8 80.4 1041.8 82.9 1041.5 85.3 1040.8 87.5 1039.7 89.7 1038.5 91.7 1037.3 93.3 1036.2 94.4 1035.1 95.1 1034.0 95.7 1033.2 96.1A2.4 2.4 0 0 0 1036.3 99.9ZM1021.3 105.5L1019.8 106.6 1017.6 108.3 1015.1 110.3 1012.4 112.7 1009.7 115.6 1006.8 118.9 1003.8 122.4 1001.0 125.7 998.4 129.0 995.9 132.4 993.6 135.6 991.6 138.7 989.9 141.4 988.5 144.1 987.4 146.8 986.9 149.8 987.3 152.8 988.4 155.6 990.1 158.1 992.3 160.1 995.0 161.3 997.9 161.9 1000.9 161.9 1004.0 161.5 1007.0 160.7 1010.1 159.3 1013.2 157.7 1016.3 155.8 1019.5 153.6 1022.6 151.2 1025.9 148.5 1029.3 145.5 1033.0 142.0 1037.0 138.2 1040.9 134.3 1044.6 130.7 1048.1 127.6 1051.4 124.8 1054.6 122.2 1057.6 119.9 1060.5 117.9 1063.3 116.3 1065.6 114.9 1067.3 113.9A0.8 0.8 0 0 0 1066.6 112.6L1064.9 113.6 1062.5 114.9 1059.6 116.6 1056.7 118.6 1053.7 120.9 1050.4 123.6 1047.0 126.5 1043.5 129.6 1039.8 133.1 1035.9 137.1 1032.0 140.9 1028.2 144.3 1024.7 147.1 1021.4 149.6 1018.2 151.8 1015.0 153.6 1011.9 155.2 1008.9 156.4 1006.0 157.3 1003.4 157.7 1000.9 157.7 998.6 157.4 996.7 156.7 995.4 155.9 994.5 154.7 993.8 153.2 993.3 151.4 993.2 149.8 993.3 148.3 993.9 146.3 994.9 144.0 996.2 141.3 997.8 138.2 999.7 134.9 1001.9 131.5 1004.1 128.1 1006.6 124.6 1009.4 121.1 1012.1 117.7 1014.6 114.9 1017.0 112.6 1019.5 110.6 1021.6 109.1 1023.1 107.9A1.5 1.5 0 0 0 1021.3 105.5ZM1067.5 112.3L1066.4 112.1 1064.8 111.8 1062.8 111.6 1060.7 111.9 1058.6 112.7 1056.4 113.8 1054.2 115.5 1052.8 118.2 1053.1 121.2 1054.4 123.5 1055.9 125.4 1057.4 127.3 1059.0 129.3 1060.8 131.2 1062.4 133.1 1063.7 134.9 1064.7 136.9 1065.5 138.9 1065.9 140.7 1066.0 142.0 1065.8 143.2 1065.2 144.8 1064.2 146.4 1063.1 147.8 1061.6 149.0 1059.7 150.1 1057.6 150.9 1055.8 151.4 1054.1 151.5 1052.3 151.3 1050.6 150.8 1049.4 150.3 1048.8 150.0 1048.5 149.7 1048.3 149.3 1048.3 148.5 1048.5 147.5 1048.9 146.2 1049.9 144.7 1051.3 142.8 1053.4 140.5 1056.0 137.8 1059.0 135.0 1062.0 132.4 1065.1 130.0 1068.4 127.6 1071.7 125.4 1075.0 123.2 1078.6 121.0 1082.3 118.8 1085.7 116.9 1088.1 115.6A0.8 0.8 0 0 0 1087.3 114.2L1084.9 115.6 1081.6 117.5 1077.8 119.7 1074.2 121.9 1070.8 124.1 1067.5 126.4 1064.2 128.8 1061.0 131.2 1057.9 133.8 1054.9 136.6 1052.1 139.2 1049.9 141.5 1048.2 143.4 1046.9 144.9 1045.9 146.4 1045.3 147.8 1045.0 149.4 1045.3 151.0 1046.1 152.5 1047.4 153.7 1049.1 154.6 1051.3 155.3 1053.7 155.8 1056.3 155.8 1058.9 155.4 1061.6 154.5 1064.2 153.3 1066.5 151.8 1068.5 150.0 1070.2 147.8 1071.6 145.2 1072.2 142.4 1071.9 139.4 1070.9 136.7 1069.5 134.3 1068.1 132.0 1066.4 129.8 1064.4 127.8 1062.7 126.0 1061.2 124.3 1060.0 122.5 1058.9 120.7 1058.3 119.5 1058.2 119.3 1058.4 119.0 1059.4 117.9 1060.9 116.7 1062.3 115.7 1063.4 115.1 1064.9 114.7 1066.4 114.4 1067.5 114.2A1.0 1.0 0 0 0 1067.5 112.3ZM892.1 70.3L891.4 72.6 890.4 75.9 889.3 79.6 888.2 83.3 887.1 87.0 886.0 90.8 884.9 94.7 883.8 98.6 882.6 102.5 881.4 106.3 880.1 110.2 879.0 114.1 877.8 118.1 876.7 122.0 875.6 126.0 874.7 129.7 873.9 133.3 873.2 136.7 872.6 140.0 872.2 143.1 872.0 146.0 871.9 148.7 872.0 151.1 872.3 153.3 872.9 155.2 873.7 156.8 874.6 158.1 875.5 159.1 876.6 159.7 877.8 159.9 878.6 159.8 879.1 159.8A1.2 1.2 0 0 0 879.1 157.3L878.6 157.3 878.0 157.2 877.6 157.2 877.2 156.9 876.6 156.3 875.7 155.4 875.0 154.3 874.5 152.8 874.2 151.0 874.2 148.7 874.3 146.1 874.6 143.4 875.2 140.5 876.0 137.4 876.9 134.1 878.0 130.6 879.2 127.1 880.6 123.3 882.1 119.5 883.5 115.7 885.0 112.0 886.6 108.2 888.2 104.4 889.7 100.6 891.1 96.8 892.5 92.9 893.8 89.1 895.1 85.4 896.2 81.6 897.3 77.8 898.1 74.5 898.8 72.2A3.5 3.5 0 0 0 892.1 70.3ZM850.8 97.6L851.6 98.0 852.8 98.6 854.6 99.2 857.1 99.6 860.6 99.8 864.8 99.9 869.3 99.8 873.6 99.7 877.8 99.5 881.9 99.2 886.0 98.9 890.1 98.5 894.2 98.0 898.3 97.5 902.3 97.0 906.4 96.6 910.7 96.3 915.0 96.1 919.2 95.9 922.7 95.8 925.6 95.9 928.0 96.0 930.0 96.2 931.4 96.3A0.8 0.8 0 0 0 931.5 94.7L930.1 94.6 928.1 94.4 925.7 94.3 922.7 94.3 919.1 94.4 915.0 94.5 910.6 94.7 906.3 95.0 902.2 95.4 898.1 95.9 894.0 96.5 889.9 96.8 885.8 97.2 881.7 97.4 877.7 97.7 873.6 97.8 869.3 97.8 864.8 97.8 860.7 97.7 857.4 97.4 855.2 97.0 853.7 96.5 852.6 96.0 851.7 95.6A1.1 1.1 0 0 0 850.8 97.6ZM903.4 98.0L904.8 98.3 906.9 98.8 909.3 99.3 911.8 99.6 914.2 99.6 916.8 99.3 919.6 99.1 922.8 98.8 926.6 98.5 930.8 98.1 935.2 97.7 939.1 97.3 942.5 97.0 945.5 96.6 948.5 96.2 951.9 96.0 955.8 96.0 960.2 96.1 964.4 96.3 968.1 96.6 971.1 97.0 973.7 97.6 975.9 98.3 977.7 98.8 978.9 99.4 979.6 99.8 980.0 100.3 980.4 100.6A1.0 1.0 0 0 0 981.7 99.1L981.3 98.8 980.7 98.3 979.7 97.7 978.3 97.1 976.4 96.6 974.1 96.1 971.4 95.5 968.3 95.0 964.5 94.7 960.2 94.5 955.8 94.5 951.8 94.5 948.4 94.7 945.4 95.0 942.3 95.4 939.0 95.8 935.0 96.2 930.7 96.5 926.4 96.9 922.6 97.2 919.5 97.5 916.7 97.8 914.2 97.9 911.8 97.9 909.5 97.7 907.2 97.3 905.2 96.8 903.8 96.5A0.8 0.8 0 0 0 903.4 98.0ZM901.1 113.5L900.1 113.1 898.8 112.4 896.9 111.8 894.8 111.8 892.8 112.5 890.9 113.6 889.2 115.0 887.7 116.6 886.5 118.5 885.6 120.6 885.1 122.8 885.0 125.0 885.7 127.1 887.0 128.8 888.8 130.2 891.1 130.6 893.1 129.9 895.0 128.7 896.7 127.2 898.4 125.5 900.1 123.6 902.0 121.2 903.7 119.1 904.8 117.6A0.8 0.8 0 0 0 903.5 116.6L902.3 118.0 900.6 120.1 898.7 122.2 896.9 123.9 895.1 125.1 893.3 126.0 891.8 126.5 891.1 126.5 891.0 126.2 890.8 125.7 890.6 125.0 890.6 124.5 890.7 123.7 891.1 122.4 891.6 121.0 892.3 119.8 893.0 118.7 894.1 117.5 895.2 116.5 896.0 115.8 896.9 115.4 898.3 115.2 899.7 115.2 900.7 115.2A0.8 0.8 0 0 0 901.1 113.5ZM903.8 115.1L903.3 116.2 902.5 117.7 901.8 119.5 901.3 121.3 901.2 123.0 901.3 124.8 901.7 126.5 902.7 128.2 904.1 129.3 905.9 130.0 907.8 130.2 909.9 130.0 912.0 129.3 914.2 128.2 916.5 126.9 918.8 125.6 921.4 124.0 924.2 122.2 926.8 120.5 928.6 119.4A0.8 0.8 0 0 0 927.7 118.1L926.0 119.2 923.4 120.8 920.5 122.5 917.9 123.9 915.5 125.0 913.2 126.0 911.1 126.7 909.4 127.0 908.0 127.0 907.0 126.6 906.1 126.1 905.6 125.6 905.3 125.1 905.1 124.1 904.9 122.9 904.8 121.6 904.9 120.2 905.1 118.5 905.4 116.9 905.6 115.7A1.0 1.0 0 0 0 903.8 115.1ZM945.6 70.3L944.9 72.6 943.9 75.9 942.7 79.6 941.6 83.3 940.6 87.0 939.5 90.8 938.3 94.7 937.2 98.6 936.0 102.5 934.8 106.3 933.6 110.2 932.4 114.1 931.2 118.0 930.0 122.0 928.9 125.9 927.8 129.7 926.9 133.2 926.0 136.7 925.3 140.0 924.8 143.0 924.4 145.9 924.2 148.6 924.2 151.1 924.3 153.2 924.8 155.1 925.4 156.7 926.3 158.0 927.4 159.1 928.9 159.8 930.4 160.0 931.7 160.0 932.5 160.0A1.2 1.2 0 0 0 932.6 157.5L931.7 157.4 930.6 157.3 929.6 157.2 928.9 156.8 928.3 156.3 927.6 155.5 926.9 154.4 926.5 152.9 926.4 151.0 926.4 148.7 926.7 146.2 927.2 143.5 927.9 140.6 928.8 137.4 929.9 134.1 931.1 130.7 932.4 127.1 933.9 123.4 935.5 119.5 937.0 115.7 938.5 112.0 940.1 108.2 941.6 104.4 943.1 100.6 944.6 96.8 946.0 92.9 947.3 89.1 948.5 85.4 949.6 81.6 950.7 77.8 951.6 74.5 952.2 72.2A3.5 3.5 0 0 0 945.6 70.3ZM946.7 122.1L947.8 121.6 949.2 120.8 950.9 119.9 952.4 118.9 953.8 118.0 955.2 116.9 956.5 115.7 957.3 114.2 957.3 112.4 956.4 110.9 955.2 109.9 953.8 109.4 952.3 109.3 950.7 109.5 949.0 110.1 947.3 111.1 945.5 112.4 943.5 114.0 941.7 115.9 940.2 117.8 939.1 119.9 938.3 122.0 938.0 124.2 938.2 126.5 939.3 128.6 940.9 130.0 942.8 131.0 944.9 131.5 947.2 131.5 949.6 131.1 952.1 130.5 954.5 129.6 956.8 128.6 959.0 127.3 961.2 125.9 963.3 124.5 965.4 122.8 967.6 121.0 969.5 119.3 970.9 118.2A0.8 0.8 0 0 0 969.9 117.0L968.5 118.1 966.6 119.7 964.3 121.4 962.2 122.8 960.0 123.9 957.8 124.9 955.6 125.7 953.5 126.3 951.3 126.7 949.1 126.9 947.1 126.9 945.7 126.7 944.7 126.3 944.0 125.8 943.7 125.4 943.6 125.1 943.6 124.6 943.8 123.5 944.3 122.1 944.9 120.7 945.8 119.1 947.1 117.3 948.5 115.7 949.8 114.4 950.8 113.6 951.8 113.1 952.6 112.8 953.1 112.8 953.4 112.9 953.7 113.2 953.9 113.4 953.9 113.4 953.8 113.9 953.2 115.0 952.2 116.3 951.2 117.4 950.0 118.4 948.5 119.4 947.0 120.2 946.0 120.8A0.8 0.8 0 0 0 946.7 122.1ZM1099.0 111.0L1097.7 110.6 1095.8 110.0 1093.4 109.5 1090.9 109.6 1088.5 110.6 1086.4 112.1 1084.5 113.8 1082.8 115.4 1081.5 117.1 1080.2 119.1 1079.2 121.2 1078.8 123.6 1079.2 125.9 1080.2 128.1 1081.8 129.9 1084.0 131.1 1086.5 131.4 1089.0 131.1 1091.5 130.4 1094.1 129.4 1097.0 128.0 1100.2 126.2 1103.0 124.5 1104.9 123.3A0.9 0.9 0 0 0 1104.1 121.7L1102.0 122.7 1099.1 124.2 1095.9 125.6 1093.1 126.6 1090.8 127.0 1088.5 127.1 1086.8 127.0 1085.7 126.6 1085.2 126.1 1084.8 125.3 1084.5 124.4 1084.4 123.7 1084.5 122.9 1085.1 121.7 1085.9 120.2 1086.9 118.7 1088.1 117.2 1089.5 115.7 1090.9 114.4 1092.0 113.6 1093.2 113.4 1095.0 113.7 1096.7 114.1 1098.1 114.4A1.7 1.7 0 0 0 1099.0 111.0ZM1105.1 123.1L1106.0 122.3 1107.2 121.0 1108.5 119.7 1109.8 118.5 1110.9 117.3 1112.0 116.2 1113.0 115.3 1113.6 114.6A1.7 1.7 0 0 0 1111.0 112.6L1110.5 113.4 1109.9 114.6 1109.1 115.9 1108.2 117.1 1107.2 118.4 1105.9 119.8 1104.7 121.0 1103.9 121.9A0.9 0.9 0 0 0 1105.1 123.1ZM1111.2 114.4L1111.7 114.9 1112.4 115.7 1113.1 116.6 1113.8 117.5 1114.5 118.5 1115.1 119.6 1115.6 120.5 1115.7 121.2 1115.7 121.9 1115.6 123.0 1115.3 124.2 1115.0 125.4 1114.7 126.4 1114.3 127.4 1113.8 128.7 1113.5 130.2 1113.7 131.6 1114.2 132.8 1114.9 133.9 1115.9 134.7 1117.0 135.3 1118.2 135.5 1119.5 135.5 1120.9 135.2 1122.3 134.5 1123.8 133.5 1125.2 132.4 1126.6 131.3 1128.0 130.1 1129.4 128.8 1130.8 127.4 1132.1 126.1 1133.5 124.6 1134.9 122.9 1136.2 121.4 1137.1 120.4A0.8 0.8 0 0 0 1135.9 119.4L1135.0 120.4 1133.8 121.9 1132.3 123.5 1130.9 124.9 1129.6 126.2 1128.2 127.5 1126.8 128.7 1125.4 129.7 1123.9 130.6 1122.5 131.4 1121.1 131.9 1120.1 132.2 1119.3 132.3 1118.8 132.1 1118.4 131.9 1118.1 131.7 1118.0 131.4 1117.9 131.1 1117.8 130.8 1117.9 130.4 1118.0 130.0 1118.4 129.2 1118.9 128.0 1119.4 126.6 1119.8 125.3 1120.1 123.9 1120.3 122.2 1120.3 120.4 1119.7 118.7 1118.8 117.3 1118.0 116.1 1117.2 115.1 1116.5 114.1 1115.7 113.0 1115.0 112.2 1114.6 111.6A2.2 2.2 0 0 0 1111.2 114.4ZM1152.8 112.5L1152.1 112.4 1150.9 112.1 1149.5 112.0 1148.1 112.0 1146.6 112.3 1145.1 112.8 1143.5 113.5 1141.9 114.6 1140.4 116.0 1139.1 117.8 1137.9 119.6 1136.9 121.5 1136.4 123.4 1136.1 125.2 1136.1 127.0 1136.5 128.6 1137.1 130.1 1138.2 131.4 1139.5 132.4 1141.1 133.0 1142.8 132.9 1144.3 132.4 1145.8 131.6 1147.1 130.5 1148.2 129.1 1149.2 127.4 1150.0 125.8 1150.6 124.2 1151.1 122.7 1151.4 121.1 1151.5 119.6 1151.2 118.1 1150.3 116.9 1149.2 116.3 1148.2 116.0 1147.7 115.8A1.1 1.1 0 0 0 1146.7 117.8L1147.3 118.1 1148.0 118.5 1148.5 118.9 1148.6 119.1 1148.5 119.6 1148.4 120.6 1148.0 121.8 1147.6 123.0 1147.0 124.4 1146.3 125.9 1145.5 127.2 1144.7 128.1 1143.9 128.7 1143.0 129.0 1142.2 129.1 1141.9 129.0 1141.8 128.8 1141.5 128.5 1141.3 127.9 1141.1 127.4 1141.1 126.6 1141.1 125.6 1141.3 124.5 1141.7 123.3 1142.2 122.0 1143.1 120.4 1144.0 118.9 1144.9 117.6 1145.7 116.7 1146.7 116.0 1147.7 115.3 1148.7 114.8 1149.8 114.4 1150.9 114.2 1152.0 114.1 1152.8 114.1A0.8 0.8 0 0 0 1152.8 112.5ZM1149.6 119.7L1150.7 119.8 1152.4 120.0 1154.3 120.2 1156.0 120.2 1157.7 120.0 1159.4 119.8 1161.0 119.4 1162.6 118.9 1164.2 118.1 1165.7 117.2 1167.0 116.3 1168.0 115.7A1.1 1.1 0 0 0 1166.6 113.9L1165.8 114.5 1164.6 115.4 1163.2 116.4 1161.8 117.1 1160.5 117.6 1159.0 118.0 1157.5 118.2 1156.0 118.4 1154.3 118.4 1152.5 118.3 1150.9 118.2 1149.8 118.1A0.8 0.8 0 0 0 1149.6 119.7ZM1167.5 110.4L1167.0 111.9 1166.3 114.1 1165.5 116.7 1164.7 119.1 1164.0 121.6 1163.1 124.3 1162.3 126.9 1161.7 129.1 1161.2 131.0 1160.7 132.7 1160.4 134.2 1160.2 135.7 1160.5 137.1 1161.2 138.4 1162.9 139.3 1164.5 138.9 1165.6 138.0 1166.7 136.8 1167.9 135.3 1169.2 133.7 1170.7 131.9 1172.3 129.9 1173.9 127.8 1175.4 126.0 1176.8 124.5 1178.2 123.0 1179.3 121.8 1180.2 121.0A1.0 1.0 0 0 0 1178.6 119.6L1177.9 120.5 1176.8 121.8 1175.5 123.3 1174.2 125.0 1172.7 126.8 1171.0 128.8 1169.3 130.8 1167.8 132.5 1166.4 133.8 1165.0 134.9 1163.8 135.6 1163.1 135.9 1163.4 135.7 1164.2 136.0 1164.5 136.2 1164.6 135.9 1164.8 135.2 1165.2 134.1 1165.8 132.5 1166.5 130.7 1167.3 128.5 1168.2 125.9 1169.1 123.2 1169.9 120.7 1170.6 118.1 1171.2 115.5 1171.7 113.2 1172.1 111.6A2.4 2.4 0 0 0 1167.5 110.4ZM1178.0 119.7L1177.4 120.8 1176.6 122.3 1175.8 124.0 1175.1 125.6 1174.7 127.0 1174.4 128.5 1174.2 130.0 1174.3 131.4 1174.6 132.6 1175.3 133.8 1176.7 134.8 1178.4 134.7 1179.7 133.9 1181.0 132.7 1182.4 131.4 1183.7 129.9 1185.0 128.3 1186.3 126.4 1187.7 124.5 1188.8 122.8 1189.7 121.3 1190.5 119.8 1191.1 118.5 1191.5 117.7A1.8 1.8 0 0 0 1188.1 116.7L1188.0 117.7 1187.9 119.0 1187.7 120.5 1187.2 122.0 1186.3 123.6 1185.1 125.5 1183.7 127.2 1182.3 128.7 1181.0 129.9 1179.6 130.9 1178.3 131.5 1177.6 131.7 1177.9 131.6 1178.3 131.7 1178.3 131.5 1178.3 131.0 1178.4 130.4 1178.6 129.4 1178.9 128.1 1179.3 126.8 1179.6 125.3 1180.1 123.6 1180.5 122.0 1180.8 120.9A1.5 1.5 0 0 0 1178.0 119.7ZM1188.8 118.7L1189.5 119.0 1190.6 119.5 1192.0 120.0 1193.5 120.4 1195.0 120.4 1196.6 120.3 1198.1 120.1 1199.4 119.9 1200.7 119.6 1201.8 119.3 1202.7 119.0 1203.4 118.8A0.8 0.8 0 0 0 1202.8 117.2L1202.2 117.4 1201.3 117.8 1200.3 118.1 1199.2 118.3 1197.9 118.5 1196.4 118.6 1195.0 118.6 1193.9 118.4 1193.0 117.9 1192.2 117.1 1191.4 116.3 1190.8 115.7A1.8 1.8 0 0 0 1188.8 118.7ZM1221.9 78.6L1223.4 79.1 1225.6 79.8 1228.4 80.5 1231.6 80.8 1235.0 80.7 1238.7 80.2 1242.5 79.5 1246.4 78.8 1250.2 78.0 1254.1 76.9 1257.9 76.0 1261.7 75.2 1265.6 74.6 1269.5 74.1 1273.3 73.8 1276.8 73.7 1279.9 73.9 1282.7 74.3 1285.2 75.0 1287.6 75.7 1289.8 76.8 1292.0 78.1 1293.9 79.5 1295.3 80.6 1296.0 81.4 1296.4 81.8 1296.6 82.4 1297.0 83.0A2.7 2.7 0 0 0 1301.8 80.6L1301.6 80.0 1301.1 79.1 1300.2 77.7 1298.7 76.4 1296.8 75.1 1294.5 73.9 1291.8 72.6 1289.0 71.7 1286.2 71.0 1283.3 70.6 1280.1 70.3 1276.8 70.3 1273.1 70.5 1269.2 70.9 1265.1 71.5 1261.1 72.2 1257.2 73.1 1253.3 74.3 1249.5 75.4 1245.8 76.2 1242.1 76.8 1238.3 77.2 1234.8 77.3 1231.8 77.2 1229.4 76.5 1227.3 75.5 1225.5 74.4 1224.1 73.6A2.7 2.7 0 0 0 1221.9 78.6ZM1259.8 70.9L1258.7 74.1 1257.0 78.6 1255.0 83.9 1253.1 89.1 1251.3 94.2 1249.3 99.7 1247.4 105.1 1245.6 110.3 1244.1 114.9 1242.7 119.3 1241.4 123.5 1240.1 127.7 1238.8 132.1 1237.5 136.4 1236.4 140.6 1235.5 144.3 1235.0 147.4 1234.7 150.1 1234.7 152.4 1234.9 154.6 1235.2 156.8 1235.8 158.8 1236.3 160.4 1236.6 161.4A2.4 2.4 0 0 0 1241.2 159.8L1240.7 158.7 1240.1 157.3 1239.5 155.7 1239.1 154.0 1238.9 152.2 1238.8 150.2 1238.9 147.9 1239.3 145.1 1240.2 141.6 1241.4 137.6 1242.8 133.3 1244.3 129.1 1245.7 124.9 1247.1 120.8 1248.7 116.5 1250.4 111.9 1252.3 106.9 1254.3 101.5 1256.3 96.1 1258.3 90.9 1260.2 85.8 1262.1 80.5 1263.8 75.9 1265.0 72.7A2.7 2.7 0 0 0 1259.8 70.9ZM1227.6 79.9L1228.9 80.9 1230.9 82.3 1233.0 83.9 1234.7 85.8 1236.1 87.8 1237.4 90.2 1238.5 92.7 1239.5 95.1 1240.4 97.5 1241.0 99.9 1241.6 102.3 1242.1 104.6 1242.5 106.6 1242.7 108.5 1242.9 110.3 1243.0 112.1 1243.2 113.8 1243.3 115.5 1243.4 117.0 1243.4 118.0A0.8 0.8 0 0 0 1245.0 118.0L1244.9 116.9 1244.8 115.4 1244.7 113.7 1244.6 111.9 1244.4 110.2 1244.3 108.3 1244.1 106.4 1243.7 104.2 1243.2 102.0 1242.6 99.5 1241.9 97.0 1241.1 94.5 1240.1 92.0 1238.9 89.5 1237.6 87.0 1236.3 84.6 1234.6 82.4 1232.8 80.2 1231.2 78.4 1230.0 77.1A1.8 1.8 0 0 0 1227.6 79.9ZM1258.7 115.2L1259.2 115.7 1259.9 116.5 1260.6 117.4 1261.3 118.3 1262.0 119.3 1262.6 120.4 1263.1 121.3 1263.2 122.0 1263.2 122.7 1263.1 123.8 1262.8 125.0 1262.5 126.2 1262.2 127.2 1261.8 128.2 1261.3 129.5 1261.0 131.0 1261.2 132.4 1261.7 133.6 1262.4 134.7 1263.4 135.5 1264.5 136.1 1265.7 136.3 1267.0 136.3 1268.4 136.0 1269.8 135.3 1271.3 134.3 1272.7 133.2 1274.1 132.1 1275.5 130.9 1276.9 129.6 1278.3 128.2 1279.6 126.9 1281.0 125.4 1282.4 123.7 1283.7 122.2 1284.6 121.2A0.8 0.8 0 0 0 1283.4 120.2L1282.5 121.2 1281.3 122.7 1279.8 124.3 1278.4 125.7 1277.1 127.0 1275.7 128.3 1274.3 129.5 1272.9 130.5 1271.4 131.4 1270.0 132.2 1268.6 132.7 1267.6 133.0 1266.8 133.1 1266.3 132.9 1265.9 132.7 1265.6 132.5 1265.5 132.2 1265.4 131.9 1265.3 131.6 1265.4 131.2 1265.5 130.8 1265.9 130.0 1266.4 128.8 1266.9 127.4 1267.3 126.1 1267.6 124.7 1267.8 123.0 1267.8 121.2 1267.2 119.5 1266.3 118.1 1265.5 116.9 1264.7 115.9 1264.0 114.9 1263.2 113.8 1262.5 113.0 1262.1 112.4A2.2 2.2 0 0 0 1258.7 115.2ZM1307.5 113.1L1306.7 112.1 1305.5 110.7 1303.9 109.3 1302.1 108.2 1300.1 107.6 1298.2 107.5 1296.0 107.8 1293.9 108.6 1291.6 109.9 1289.4 111.6 1287.4 113.5 1285.6 115.4 1284.2 117.2 1283.0 119.1 1282.2 121.2 1281.8 123.5 1282.1 125.8 1283.1 127.8 1284.6 129.4 1286.6 130.5 1288.7 130.6 1290.7 130.0 1292.6 129.1 1294.5 128.0 1296.4 126.5 1298.4 124.7 1300.3 122.8 1302.0 120.9 1303.7 119.1 1305.3 117.2 1306.6 115.5 1307.6 114.3A0.8 0.8 0 0 0 1306.3 113.3L1305.3 114.5 1304.0 116.2 1302.5 118.0 1300.9 119.8 1299.0 121.5 1297.0 123.2 1295.0 124.7 1293.2 125.8 1291.4 126.5 1289.8 126.8 1288.5 126.8 1288.0 126.6 1287.8 126.2 1287.5 125.4 1287.3 124.5 1287.3 123.8 1287.5 123.0 1288.1 121.8 1288.9 120.3 1290.0 118.8 1291.3 117.1 1292.9 115.3 1294.5 113.6 1295.9 112.5 1297.2 111.9 1298.4 111.7 1299.7 111.7 1300.8 111.8 1302.1 112.2 1303.7 113.0 1305.2 113.9 1306.3 114.6A1.0 1.0 0 0 0 1307.5 113.1ZM1306.1 113.4L1305.5 114.7 1304.6 116.7 1303.8 119.0 1303.2 121.2 1303.1 123.2 1303.3 125.2 1303.8 127.1 1304.7 128.7 1306.2 129.9 1307.9 130.6 1309.7 130.7 1311.5 130.5 1313.4 129.9 1315.5 129.0 1317.6 128.0 1319.5 126.7 1321.4 125.3 1323.2 123.5 1324.8 122.0 1326.0 120.9A0.8 0.8 0 0 0 1324.9 119.8L1323.8 120.8 1322.1 122.2 1320.2 123.7 1318.3 124.9 1316.5 125.7 1314.5 126.5 1312.6 127.0 1311.0 127.2 1309.8 127.1 1308.9 126.9 1308.3 126.5 1308.0 126.2 1307.7 125.6 1307.5 124.5 1307.4 123.1 1307.3 121.7 1307.5 119.9 1307.9 117.8 1308.4 115.7 1308.8 114.2A1.4 1.4 0 0 0 1306.1 113.4ZM1343.5 111.1L1342.4 110.6 1340.6 109.9 1338.4 109.2 1336.0 109.0 1333.7 109.7 1331.6 110.8 1329.6 112.1 1327.9 113.7 1326.3 115.5 1324.9 117.5 1323.8 119.8 1323.2 122.3 1323.4 124.7 1324.1 127.0 1325.5 129.1 1327.5 130.7 1330.0 131.3 1332.6 131.3 1335.2 131.0 1337.8 130.4 1340.3 129.5 1342.9 128.3 1345.4 126.9 1347.7 125.4 1350.0 123.7 1352.2 121.8 1354.1 120.0 1355.4 118.7A0.8 0.8 0 0 0 1354.4 117.6L1353.0 118.8 1351.2 120.6 1349.0 122.5 1346.8 124.0 1344.5 125.2 1342.0 126.2 1339.5 126.9 1337.1 127.4 1334.9 127.5 1332.7 127.3 1330.9 126.9 1329.9 126.4 1329.4 125.8 1329.0 124.9 1328.8 123.8 1328.7 122.8 1329.0 121.7 1329.7 120.2 1330.7 118.6 1331.8 117.2 1332.9 115.9 1334.3 114.7 1335.6 113.7 1336.7 113.1 1337.9 113.1 1339.5 113.4 1341.1 114.0 1342.3 114.3A1.7 1.7 0 0 0 1343.5 111.1ZM1350.9 125.9L1352.5 122.6 1354.8 117.9 1357.3 112.7 1359.7 107.7 1362.0 102.9 1364.4 98.0 1366.8 93.4 1368.8 89.7 1370.6 87.0 1372.2 85.0 1373.6 83.5 1374.7 82.5 1375.2 82.2 1375.1 82.3 1375.2 82.4 1375.7 82.5A1.9 1.9 0 0 0 1376.3 78.7L1376.0 78.7 1375.1 78.5 1373.6 78.9 1372.3 79.9 1371.1 81.2 1369.7 83.0 1368.1 85.3 1366.4 88.3 1364.4 92.3 1362.3 97.0 1360.1 102.0 1357.9 106.9 1355.6 111.9 1353.1 117.2 1351.0 121.9 1349.5 125.1A0.8 0.8 0 0 0 1350.9 125.9ZM1374.1 80.6L1373.9 81.6 1373.8 83.0 1373.4 84.5 1372.9 86.3 1372.1 88.7 1371.0 91.5 1369.8 94.7 1368.4 97.9 1366.9 101.2 1365.2 104.8 1363.5 108.4 1361.8 111.8 1360.1 114.7 1358.4 117.5 1356.7 120.4 1355.1 123.5 1353.6 126.9 1352.1 130.5 1350.8 134.1 1349.8 137.6 1349.2 140.9 1348.8 144.1 1348.6 147.0 1348.6 149.5 1348.7 151.6 1349.0 153.4 1349.5 154.9 1350.1 156.2 1351.0 157.4 1352.0 158.3 1352.9 158.9 1353.5 159.3A1.5 1.5 0 0 0 1355.1 156.7L1354.5 156.4 1353.7 155.9 1353.0 155.4 1352.5 154.8 1352.0 153.9 1351.5 152.7 1351.1 151.3 1351.0 149.5 1351.1 147.1 1351.4 144.4 1351.9 141.4 1352.8 138.4 1354.0 135.3 1355.5 132.0 1357.2 128.6 1358.9 125.5 1360.6 122.7 1362.4 120.1 1364.3 117.3 1366.2 114.2 1368.1 110.8 1370.1 107.2 1371.9 103.6 1373.6 100.1 1375.0 96.8 1376.3 93.5 1377.3 90.4 1378.1 87.7 1378.4 85.2 1378.3 83.1 1378.1 81.6 1377.9 80.6A1.9 1.9 0 0 0 1374.1 80.6ZM1357.9 120.8L1359.6 119.3 1362.2 117.0 1365.0 114.7 1367.4 113.0 1369.7 112.0 1372.1 111.3 1374.4 110.8 1376.0 110.5A2.0 2.0 0 0 0 1375.0 106.5L1373.4 107.0 1371.1 107.6 1368.3 108.6 1365.6 110.0 1362.9 112.1 1360.1 114.7 1357.6 117.1 1355.9 118.8A1.4 1.4 0 0 0 1357.9 120.8ZM1352.7 128.3L1354.3 128.1 1356.5 127.8 1359.2 127.3 1362.0 126.7 1364.7 125.9 1367.7 124.9 1370.7 123.9 1373.5 122.9 1376.4 121.9 1379.4 120.9 1382.0 120.0 1383.8 119.3A0.9 0.9 0 0 0 1383.2 117.7L1381.4 118.3 1378.8 119.2 1375.8 120.1 1372.9 121.1 1370.0 122.0 1367.1 123.0 1364.1 123.9 1361.4 124.7 1358.8 125.3 1356.2 125.8 1353.9 126.2 1352.3 126.5A1.0 1.0 0 0 0 1352.7 128.3ZM1383.8 119.7L1384.8 119.3 1386.1 118.6 1387.6 117.9 1388.9 117.3 1390.2 116.6 1391.6 116.0 1392.8 115.2 1393.8 114.4 1394.4 113.2 1394.3 111.9 1393.7 110.9 1392.9 110.2 1392.0 109.9 1390.9 109.8 1389.6 109.9 1388.2 110.5 1386.8 111.4 1385.3 112.6 1383.8 114.1 1382.5 115.8 1381.5 117.8 1380.8 119.9 1380.4 122.1 1380.4 124.3 1380.9 126.3 1382.0 128.1 1383.5 129.6 1385.4 130.6 1387.6 131.0 1389.9 130.8 1392.2 130.4 1394.4 129.8 1396.5 129.1 1398.6 128.1 1400.7 126.9 1402.6 125.7 1404.4 124.4 1406.1 122.9 1407.7 121.4 1409.1 120.1 1410.2 118.9 1411.2 117.8 1411.9 116.8 1412.6 116.1 1413.3 115.6 1413.9 115.3 1414.5 115.1 1414.9 114.9A1.4 1.4 0 0 0 1413.1 112.7L1412.9 113.0 1412.5 113.5 1412.0 114.1 1411.4 114.9 1410.7 115.8 1409.9 116.8 1409.0 117.8 1407.9 118.9 1406.5 120.1 1404.9 121.5 1403.2 122.8 1401.4 123.9 1399.5 124.8 1397.5 125.7 1395.5 126.3 1393.6 126.8 1391.7 127.0 1389.7 127.1 1388.0 126.9 1387.0 126.6 1386.4 126.1 1385.9 125.4 1385.6 124.5 1385.4 123.7 1385.4 122.6 1385.7 121.2 1386.2 119.6 1386.7 118.2 1387.4 116.9 1388.3 115.5 1389.4 114.3 1390.2 113.5 1390.7 113.1 1391.1 113.0 1391.4 113.0 1391.5 113.0 1391.4 112.9 1391.4 112.8 1391.3 112.6 1391.4 112.6 1391.0 113.1 1390.2 114.0 1389.1 114.9 1388.1 115.7 1386.8 116.5 1385.4 117.2 1384.1 117.9 1383.2 118.3A0.8 0.8 0 0 0 1383.8 119.7ZM1412.8 114.9L1413.3 115.4 1414.0 116.2 1414.7 117.1 1415.4 118.0 1416.1 119.0 1416.7 120.1 1417.2 121.0 1417.3 121.7 1417.3 122.4 1417.2 123.5 1416.9 124.7 1416.6 125.9 1416.3 126.9 1415.9 127.9 1415.4 129.2 1415.1 130.7 1415.3 132.1 1415.8 133.3 1416.5 134.4 1417.5 135.2 1418.6 135.8 1419.8 136.0 1421.1 136.0 1422.6 135.7 1424.0 134.9 1425.5 133.9 1426.9 132.8 1428.2 131.8 1429.2 131.1 1430.1 130.4 1431.1 129.6 1432.3 128.5 1433.9 127.1 1435.7 125.4 1437.4 123.6 1439.1 122.0 1440.5 120.5 1441.9 119.1 1443.1 117.8 1443.9 116.9A0.8 0.8 0 0 0 1442.7 115.9L1441.9 116.8 1440.8 118.0 1439.4 119.5 1437.9 121.0 1436.4 122.5 1434.6 124.3 1432.8 125.9 1431.3 127.3 1430.1 128.2 1429.1 128.9 1428.2 129.5 1427.0 130.2 1425.7 130.9 1424.1 131.8 1422.7 132.4 1421.6 132.7 1420.9 132.8 1420.4 132.6 1420.0 132.4 1419.7 132.2 1419.6 131.9 1419.5 131.6 1419.4 131.3 1419.5 130.9 1419.6 130.5 1420.0 129.7 1420.5 128.5 1421.0 127.1 1421.4 125.8 1421.7 124.4 1421.9 122.7 1421.9 120.9 1421.3 119.2 1420.4 117.8 1419.6 116.6 1418.8 115.6 1418.1 114.6 1417.3 113.5 1416.6 112.7 1416.2 112.1A2.2 2.2 0 0 0 1412.8 114.9Z"/></svg>
</div>
<div id="sheettabs">
<svg class="abs" style="left:24px;top:9px" width="8" height="11" viewBox="0 0 8 11"><path d="M7 1v9L1 5.500z" fill="#c2c2c2"/></svg>
<svg class="abs" style="left:54px;top:9px" width="8" height="11" viewBox="0 0 8 11"><path d="M1 1v9l6-4.500z" fill="#c2c2c2"/></svg>
<div class="abs" style="left:101px;top:0;width:85px;height:25.500px;background:#fff;border-bottom:2px solid #217346"></div>
<div class="t" style="left:113.60px;top:3.43px;font-size:16.5px;color:#1e6b41;letter-spacing:0.100px;font-weight:bold;">Tracker</div>
<div class="t" style="left:199.70px;top:3.43px;font-size:16.5px;color:#444;letter-spacing:-0.229px;">Register</div>
<div class="abs" style="left:275px;top:4px;width:1px;height:20px;background:#b5b5b5"></div>
<div class="t" style="left:291.50px;top:3.43px;font-size:16.5px;color:#444;letter-spacing:-0.071px;">Tracker Example</div>
<div class="abs" style="left:432px;top:4px;width:1px;height:20px;background:#b5b5b5"></div>
<div class="t" style="left:448.20px;top:3.43px;font-size:16.5px;color:#444;letter-spacing:-0.033px;">Register Example</div>
<div class="abs" style="left:594px;top:4px;width:1px;height:20px;background:#b5b5b5"></div>
<svg class="abs" style="left:626px;top:3.5px" width="23" height="23" viewBox="0 0 23 23"><circle cx="11.500" cy="11.500" r="9.700" fill="none" stroke="#666" stroke-width="1.300"/><path d="M6.500 11.500h10M11.500 6.500v10" stroke="#666" stroke-width="1.500"/></svg>
<div class="abs" style="left:1140px;top:2px;width:770px;height:24px;background:#f0f0f0"></div>
<div class="abs" style="left:1147px;top:9.0px;width:2.500px;height:2.500px;background:#b5b5b5"></div>
<div class="abs" style="left:1147px;top:13.5px;width:2.500px;height:2.500px;background:#b5b5b5"></div>
<div class="abs" style="left:1147px;top:18.0px;width:2.500px;height:2.500px;background:#b5b5b5"></div>
<div class="abs" style="left:1165px;top:5px;width:19px;height:19px;background:#fff;border:1px solid #ababab"></div>
<svg class="abs" style="left:1170px;top:9px" width="8" height="11" viewBox="0 0 8 11"><path d="M7 .5v10L1 5.500z" fill="#222"/></svg>
<div class="abs" style="left:1183px;top:5px;width:480px;height:19px;background:#fff;border:1px solid #ababab"></div>
<div class="abs" style="left:1872px;top:5px;width:19px;height:19px;background:#fff;border:1px solid #ababab"></div>
<svg class="abs" style="left:1878px;top:9px" width="8" height="11" viewBox="0 0 8 11"><path d="M1 .5v10l6-5z" fill="#222"/></svg>
<div class="abs" style="left:1893px;top:0;width:17px;height:30px;background:#e6e6e6"></div>
</div>
<div id="status">
<div class="abs" style="left:0;top:-1px;width:1910px;height:1px;background:#d0d0d0"></div>
<div class="t" style="left:8.30px;top:7.16px;font-size:12.8px;color:#555;letter-spacing:-0.325px;">Ready</div>
<svg class="abs" style="left:67px;top:3px" width="21" height="20" viewBox="0 0 21 20"><g fill="none" stroke="#555" stroke-width="1.300" stroke-linecap="round" stroke-linejoin="round"><circle cx="9" cy="3.300" r="2"/><path d="M2 6.500c2.500 1.500 4.500 1.800 7 1.800s4.500-.3 7-1.800"/><path d="M9 8.300v3.500l-4 6.700"/><path d="M9 11.800l1.500 2"/><path d="M11 15.500l2.500 2.700 5-6"/></g></svg>
<div class="t" style="left:90.50px;top:7.16px;font-size:12.8px;color:#555;letter-spacing:0.179px;">Accessibility: Good to go</div>
<svg class="abs" style="left:1408px;top:4px" width="20" height="18" viewBox="0 0 20 18"><g fill="none" stroke="#555" stroke-width="1.300"><path d="M9 11.500H1.500v-10h14v5"/><path d="M5 14.500h4"/><circle cx="13.500" cy="12" r="2.300"/><path d="M13.500 7.200v2M13.500 14.800v2M8.700 12h2M16.300 12h2M10.200 8.700l1.400 1.400M15.400 13.900l1.400 1.400M10.200 15.300l1.400-1.400M15.400 10.100l1.400-1.400"/></g></svg>
<div class="t" style="left:1429.90px;top:7.66px;font-size:12.8px;color:#444;letter-spacing:0.020px;">Display Settings</div>
<div class="abs" style="left:1546px;top:0;width:49px;height:24px;background:#c8c8c8"></div>
<svg class="abs" style="left:1561px;top:3.5px" width="18" height="18" viewBox="0 0 18 18"><g fill="none" stroke="#555" stroke-width="1.300"><rect x="1" y="1" width="16" height="16"/><path d="M1 6.300h16M1 11.700h16M6.300 1v16M11.700 1v16"/></g></svg>
<svg class="abs" style="left:1611px;top:3.5px" width="20" height="18" viewBox="0 0 20 18"><g fill="none" stroke="#555" stroke-width="1.300"><rect x="1" y="1" width="18" height="16"/><rect x="4.500" y="4" width="11" height="10"/><path d="M6.500 7h7M6.500 9.500h7M6.500 12h7" stroke-width="1"/></g></svg>
<svg class="abs" style="left:1661px;top:3.5px" width="19" height="18" viewBox="0 0 19 18"><g fill="none" stroke="#555" stroke-width="1.300"><path d="M1 1h17v16H1z"/><path d="M6.500 1v8h6V1"/><path d="M1 9h5.500M12.500 9H18" stroke-dasharray="0"/></g></svg>
<div class="abs" style="left:1702px;top:12px;width:11px;height:1.300px;background:#555"></div>
<div class="abs" style="left:1719px;top:12px;width:125px;height:1px;background:#777"></div>
<div class="abs" style="left:1780.500px;top:5px;width:6px;height:15.500px;background:#333"></div>
<div class="abs" style="left:1849px;top:12px;width:11px;height:1.300px;background:#555"></div>
<div class="abs" style="left:1853.800px;top:7px;width:1.300px;height:11px;background:#555"></div>
<div class="t" style="left:1877.00px;top:7.16px;font-size:12.8px;color:#555;letter-spacing:-0.600px;">110%</div>
</div>
</body></html>
